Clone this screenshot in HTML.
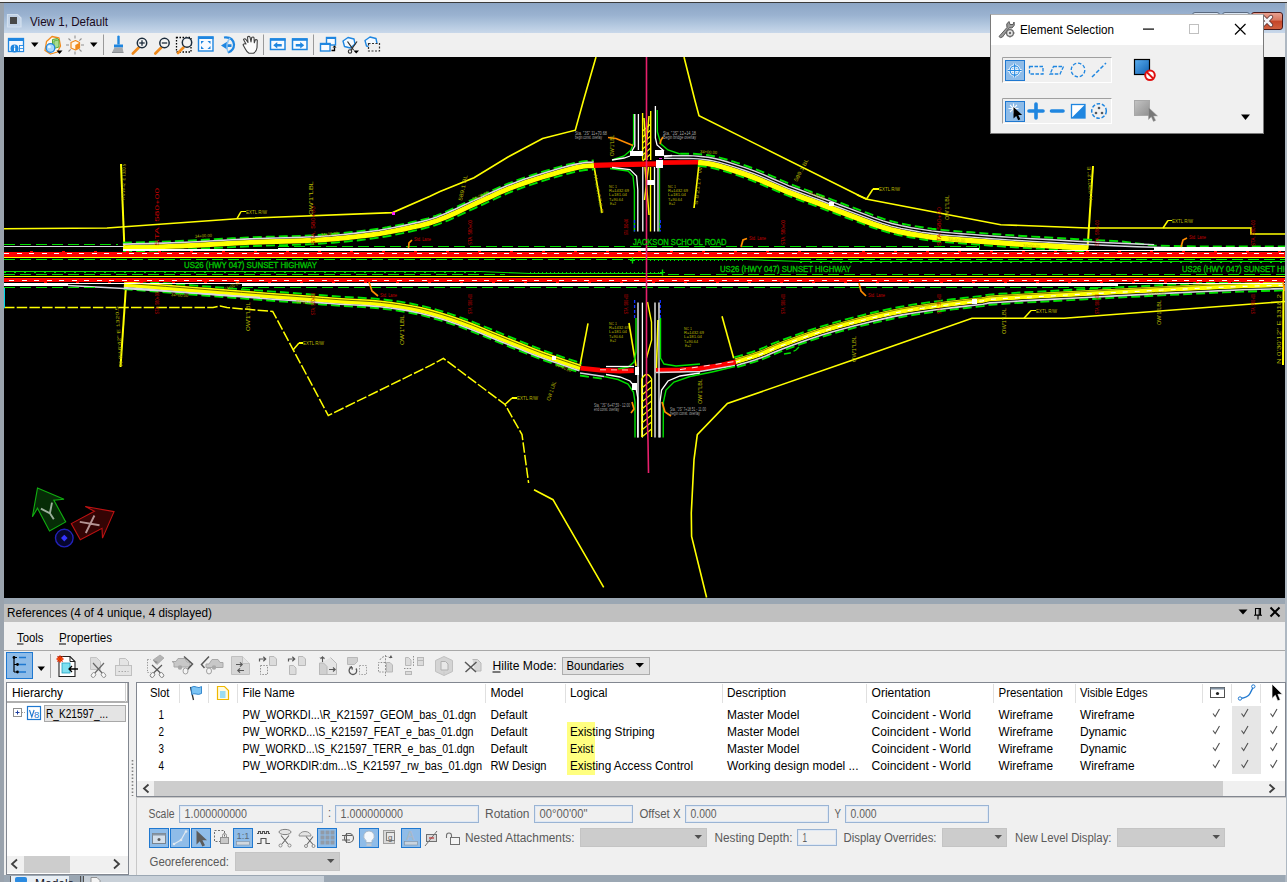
<!DOCTYPE html>
<html>
<head>
<meta charset="utf-8">
<title>View 1</title>
<style>
*{box-sizing:border-box;margin:0;padding:0}
html,body{width:1287px;height:882px;overflow:hidden;background:#9fa9b3;font-family:"Liberation Sans",sans-serif;font-size:12px;color:#000}
.abs{position:absolute}
#top0{left:0;top:0;width:1287px;height:2px;background:#f4f4f6}
#top1{left:0;top:2px;width:1287px;height:1px;background:#3a3a3a}
#titlebar{left:4px;top:3px;width:1281px;height:30px;background:linear-gradient(#8ca5c5 0%,#9ab2d0 40%,#b2c7df 72%,#c9d8ea 100%)}
#title{left:30px;top:13px;font-size:12.6px;color:#1a0a20;white-space:nowrap}
#vtb{left:4px;top:33px;width:1281px;height:24px;background:#f0f0f0}
#canvas{left:4px;top:57px;width:1281px;height:541px;background:#000}
#lb{left:0;top:3px;width:4px;height:879px;background:#9aa3ad}
#rb{left:1285px;top:3px;width:2px;height:879px;background:#aeb8c2}
#vbot{left:0;top:598px;width:1287px;height:6px;background:#9ba7b3}
/* references */
#rtitle{left:4px;top:604px;width:1283px;height:18px;background:#c0c0c0}
#rmenu{left:4px;top:622px;width:1283px;height:29px;background:#f0f0f0;border-bottom:1px solid #a8a8a8}
#rtool{left:4px;top:651px;width:1283px;height:31px;background:#f0f0f0}
#rbody{left:4px;top:682px;width:1283px;height:193px;background:#f0f0f0}
#bstrip{left:0;top:875px;width:1287px;height:7px;background:#9ba7b3}
.t{position:absolute;white-space:nowrap}
</style>
</head>
<body>
<div class="abs" id="top0"></div>
<div class="abs" id="top1"></div>
<div class="abs" id="titlebar"></div>
<div class="abs" id="vtb"></div>
<div class="abs" id="canvas"></div>
<div class="abs" id="vbot"></div>
<div class="abs" id="rtitle"></div>
<div class="abs" id="rmenu"></div>
<div class="abs" id="rtool"></div>
<div class="abs" id="rbody"></div>
<div class="abs" id="bstrip"></div>
<div class="abs" id="lb"></div>
<div class="abs" id="rb"></div>
<svg class="abs" style="left:0;top:0" width="1287" height="882" viewBox="0 0 1287 882"><defs><clipPath id="cv"><rect x="4" y="57" width="1281" height="541"/></clipPath></defs><g clip-path="url(#cv)"><g><polyline points="4.0,228.7 107.0,228.0 237.0,218.7 392.6,212.6 430.0,196.3 440.0,191.5 474.0,177.8 508.0,157.0 542.6,138.5 575.3,130.2 583.6,100.0 596.0,57.0" fill="none" stroke="#ffff00" stroke-width="1.6" />
<line x1="237" y1="218.7" x2="241" y2="211.5" stroke="#ffff00" stroke-width="1.5"/>
<line x1="241" y1="211.5" x2="246" y2="211.5" stroke="#ffff00" stroke-width="1.5" shape-rendering="crispEdges"/>
<polyline points="684.0,57.0 694.8,100.0 699.0,115.6 760.0,146.1 860.0,196.0 866.5,199.0" fill="none" stroke="#ffff00" stroke-width="1.6" />
<polyline points="857.0,194.7 866.0,199.0 1000.7,224.7 1087.5,228.0 1251.0,228.0 1251.0,234.0 1285.0,234.0" fill="none" stroke="#ffff00" stroke-width="1.6" />
<line x1="866.5" y1="199" x2="873" y2="189" stroke="#ffff00" stroke-width="1.5"/>
<line x1="873" y1="189" x2="879" y2="189" stroke="#ffff00" stroke-width="1.5" shape-rendering="crispEdges"/>
<line x1="1163" y1="228" x2="1168" y2="220.5" stroke="#ffff00" stroke-width="1.5"/>
<line x1="1168" y1="220.5" x2="1172" y2="220.5" stroke="#ffff00" stroke-width="1.5" shape-rendering="crispEdges"/>
<polyline points="4.0,307.4 213.0,307.4 220.0,306.0 227.0,307.6 272.7,311.4 328.3,415.5 430.0,365.6 443.4,358.4 505.0,404.5 522.0,434.6 528.6,483.0" fill="none" stroke="#ffff00" stroke-width="1.5" stroke-dasharray="10.5 2.2" />
<polyline points="534.0,489.7 553.0,499.7 603.7,587.3" fill="none" stroke="#ffff00" stroke-width="1.6" />
<line x1="293" y1="350" x2="299" y2="343" stroke="#ffff00" stroke-width="1.5"/>
<line x1="299" y1="343" x2="303" y2="343" stroke="#ffff00" stroke-width="1.5" shape-rendering="crispEdges"/>
<line x1="505" y1="404.5" x2="512" y2="398" stroke="#ffff00" stroke-width="1.5"/>
<line x1="512" y1="398" x2="517" y2="398" stroke="#ffff00" stroke-width="1.5" shape-rendering="crispEdges"/>
<polyline points="706.6,597.5 691.6,536.5 691.3,513.0 694.0,459.6 697.3,434.6 727.4,403.5 860.0,357.5 972.0,318.3 1064.0,318.3 1285.0,301.5" fill="none" stroke="#ffff00" stroke-width="1.6" />
<line x1="1024" y1="318.3" x2="1031" y2="310.5" stroke="#ffff00" stroke-width="1.5"/>
<line x1="1031" y1="310.5" x2="1036" y2="310.5" stroke="#ffff00" stroke-width="1.5" shape-rendering="crispEdges"/>
<line x1="121" y1="164" x2="124.5" y2="250" stroke="#ffff00" stroke-width="2"/>
<line x1="126" y1="286" x2="120.5" y2="367" stroke="#ffff00" stroke-width="2"/>
<line x1="1093" y1="166" x2="1087.5" y2="249" stroke="#ffff00" stroke-width="2"/>
<line x1="1283.5" y1="285" x2="1283" y2="365" stroke="#ffff00" stroke-width="2"/>
<line x1="594" y1="166" x2="602" y2="213" stroke="#ffff00" stroke-width="1.6"/>
<line x1="699" y1="164" x2="694" y2="208" stroke="#ffff00" stroke-width="1.6"/>
<line x1="588" y1="323.3" x2="580.2" y2="364.5" stroke="#ffff00" stroke-width="1.6"/>
<line x1="722" y1="316.3" x2="733.7" y2="358.3" stroke="#ffff00" stroke-width="1.6"/>
<line x1="629" y1="323" x2="636" y2="366" stroke="#ffff00" stroke-width="1.6"/>
<line x1="658" y1="320" x2="656.3" y2="372" stroke="#ffff00" stroke-width="1.6"/>
<polyline points="122.9,242.7 132.8,242.4 147.0,242.1 163.3,241.6 179.8,241.0 196.4,240.2 214.0,239.3 232.1,238.3 249.8,237.4 267.4,236.8 285.0,236.3 302.0,235.8 317.7,235.0 332.1,234.0 345.6,232.7 358.1,231.4 369.4,230.0 379.0,228.7 387.2,227.3 394.9,225.8 403.0,224.1 411.4,222.3 419.7,220.4 428.0,218.3 436.3,215.6 445.0,212.2 453.9,208.2 463.0,203.9 471.9,199.8 480.5,195.8 489.0,191.9 497.5,188.0 506.1,184.4 514.9,181.0 523.7,177.9 532.4,175.0 541.1,172.2 550.2,169.5 559.4,166.8 568.2,164.4 575.7,162.6 582.0,161.5 587.1,160.9 591.0,160.7 593.7,160.5" fill="none" stroke="#00e000" stroke-width="1.9" stroke-dasharray="9 4" />
<polyline points="123.1,251.5 133.0,251.2 147.2,250.9 163.6,250.4 180.2,249.8 196.8,249.0 214.5,248.0 232.5,247.1 250.2,246.2 267.6,245.6 285.2,245.1 302.3,244.6 318.2,243.8 332.9,242.7 346.5,241.5 359.1,240.2 370.5,238.8 380.3,237.4 388.8,236.0 396.7,234.4 404.8,232.7 413.3,230.9 421.8,229.0 430.4,226.7 439.3,223.9 448.4,220.3 457.6,216.2 466.7,211.9 475.6,207.8 484.2,203.8 492.7,199.9 501.0,196.1 509.4,192.5 517.9,189.3 526.5,186.2 535.1,183.4 543.7,180.6 552.7,177.9 561.8,175.3 570.4,173.0 577.6,171.2 583.3,170.2 587.9,169.7 591.5,169.5 594.3,169.3" fill="none" stroke="#00e000" stroke-width="1.9" stroke-dasharray="9 4" />
<polyline points="123.0,247.7 132.9,247.4 147.1,247.1 163.5,246.6 180.0,246.0 196.6,245.2 214.3,244.2 232.3,243.3 250.0,242.4 267.5,241.8 285.1,241.3 302.2,240.8 318.0,240.0 332.5,239.0 346.1,237.7 358.6,236.4 370.0,235.0 379.8,233.6 388.1,232.2 395.9,230.7 404.0,229.0 412.5,227.2 420.9,225.3 429.4,223.1 438.0,220.3 446.9,216.8 456.0,212.7 465.1,208.4 474.0,204.3 482.6,200.3 491.1,196.4 499.5,192.6 508.0,189.0 516.6,185.7 525.3,182.6 534.0,179.7 542.6,177.0 551.6,174.3 560.8,171.6 569.5,169.3 576.8,167.5 582.7,166.4 587.5,165.9 591.3,165.7 594.0,165.5" fill="none" stroke="#ffff00" stroke-width="4.9" />
<polyline points="122.9,244.2 132.8,243.9 147.0,243.6 163.4,243.1 179.9,242.5 196.5,241.7 214.1,240.7 232.2,239.8 249.9,238.9 267.4,238.3 285.0,237.8 302.0,237.3 317.8,236.5 332.3,235.5 345.8,234.2 358.2,232.9 369.5,231.5 379.2,230.2 387.5,228.8 395.2,227.3 403.3,225.6 411.7,223.8 420.0,221.9 428.4,219.7 436.8,217.0 445.5,213.6 454.5,209.5 463.6,205.3 472.5,201.1 481.2,197.2 489.6,193.2 498.1,189.4 506.7,185.8 515.4,182.4 524.1,179.3 532.9,176.4 541.6,173.7 550.6,170.9 559.8,168.3 568.6,165.9 576.1,164.1 582.2,163.0 587.2,162.4 591.1,162.2 593.8,162.0" fill="none" stroke="#d8d8e0" stroke-width="1.6" />
<polyline points="680.1,153.7 684.3,153.7 688.8,153.7 693.6,153.8 698.7,154.1 703.5,154.6 708.4,155.2 714.0,156.2 720.5,157.8 728.4,160.0 737.2,162.8 746.5,166.0 755.6,169.2 764.4,172.8 773.0,176.5 781.5,180.3 789.9,183.8 798.3,187.1 806.8,190.2 815.3,193.3 823.9,196.5 832.4,199.8 840.9,203.0 849.3,206.2 857.9,209.4 866.5,212.7 875.1,215.9 883.7,218.9 892.5,221.5 901.9,223.7 911.8,225.6 921.9,227.3 931.9,228.8 941.7,229.9 951.6,230.8 961.6,231.6 971.6,232.3 981.8,233.1 991.9,233.9 1002.0,234.6 1012.1,235.3 1022.3,236.0 1032.6,236.6 1042.7,237.2 1052.5,237.7 1061.1,238.2 1068.9,238.7 1077.4,239.2 1088.4,239.7 1102.8,240.4 1119.5,241.2 1154.0,245.6 1200.0,246.4 1285.0,246.5" fill="none" stroke="#00e000" stroke-width="1.9" stroke-dasharray="9 4" />
<polyline points="697.7,165.9 702.2,166.3 706.7,166.9 711.5,167.8 717.5,169.2 725.0,171.3 733.5,174.0 742.6,177.1 751.4,180.3 759.8,183.7 768.3,187.4 776.9,191.1 785.5,194.7 794.1,198.1 802.7,201.3 811.3,204.4 819.8,207.6 828.2,210.8 836.7,214.0 845.2,217.3 853.8,220.5 862.4,223.7 871.1,227.0 880.1,230.1 889.5,232.9 899.4,235.2 909.7,237.2 920.1,239.0 930.3,240.5 940.5,241.7 950.6,242.6 960.7,243.3 970.7,244.1 980.9,244.9 991.0,245.7 1001.2,246.4 1011.4,247.1 1021.6,247.7 1031.9,248.4 1042.0,248.9 1051.8,249.5 1060.4,250.0 1068.2,250.5 1076.8,250.9 1087.8,251.5" fill="none" stroke="#00e000" stroke-width="1.9" stroke-dasharray="9 4" />
<polyline points="698.0,162.4 702.6,162.9 707.2,163.4 712.3,164.3 718.4,165.8 726.0,168.0 734.6,170.7 743.7,173.8 752.6,177.0 761.1,180.4 769.7,184.2 778.3,187.9 786.8,191.5 795.4,194.8 803.9,198.0 812.5,201.1 821.0,204.3 829.5,207.5 837.9,210.8 846.4,214.0 855.0,217.2 863.6,220.4 872.3,223.7 881.2,226.8 890.4,229.5 900.2,231.8 910.3,233.8 920.6,235.5 930.8,237.0 940.9,238.2 950.9,239.1 960.9,239.8 971.0,240.6 981.1,241.4 991.3,242.2 1001.5,242.9 1011.6,243.6 1021.8,244.3 1032.1,244.9 1042.2,245.4 1052.0,246.0 1060.6,246.5 1068.4,247.0 1077.0,247.5 1088.0,248.0" fill="none" stroke="#ffff00" stroke-width="5.3" />
<polyline points="664.0,158.3 666.9,158.3 670.9,158.4 675.5,158.4 680.0,158.5 684.3,158.5 688.8,158.5 693.4,158.6 698.3,158.9 703.0,159.4 707.7,160.0 713.0,160.9 719.3,162.4 727.0,164.6 735.7,167.4 744.9,170.5 753.8,173.7 762.5,177.2 771.1,180.9 779.6,184.7 788.1,188.3 796.6,191.5 805.1,194.7 813.7,197.8 822.2,201.0 830.7,204.3 839.2,207.5 847.6,210.7 856.2,213.9 864.9,217.2 873.5,220.4 882.2,223.4 891.3,226.1 900.9,228.4 910.9,230.3 921.1,232.1 931.3,233.5 941.2,234.7 951.2,235.6 961.2,236.3 971.3,237.1 981.4,237.9 991.5,238.7 1001.7,239.4 1011.8,240.1 1022.0,240.8 1032.3,241.4 1042.4,241.9 1052.2,242.5 1060.8,243.0 1068.6,243.5 1077.2,244.0 1088.2,244.5 1102.6,245.2 1119.3,246.0 1136.9,246.7 1154.1,247.3 1170.6,247.7 1187.1,248.0 1203.6,248.3 1220.0,248.5 1237.9,248.7 1256.7,248.9 1273.4,249.0 1285.0,249.1" fill="none" stroke="#d8d8e0" stroke-width="1.4" />
<polyline points="664.1,155.6 666.9,155.6 670.9,155.7 675.6,155.7 680.1,155.8 684.3,155.8 688.8,155.8 693.6,155.9 698.5,156.2 703.3,156.7 708.1,157.3 713.6,158.3 720.0,159.8 727.8,162.0 736.6,164.8 745.8,167.9 754.8,171.2 763.5,174.7 772.2,178.5 780.7,182.2 789.1,185.8 797.6,189.0 806.1,192.2 814.6,195.3 823.2,198.5 831.7,201.7 840.1,205.0 848.6,208.2 857.2,211.4 865.8,214.6 874.4,217.9 883.1,220.9 892.0,223.5 901.5,225.7 911.4,227.7 921.6,229.4 931.6,230.9 941.5,232.0 951.4,232.9 961.4,233.7 971.5,234.4 981.6,235.2 991.7,236.0 1001.9,236.7 1012.0,237.4 1022.2,238.1 1032.4,238.7 1042.6,239.3 1052.4,239.8 1061.0,240.3 1068.8,240.8 1077.3,241.3 1088.3,241.8 1102.7,242.5 1119.4,243.3 1137.0,244.0 1154.2,244.6" fill="none" stroke="#d8d8e0" stroke-width="1.4" />
<rect x="828.5" y="201.5" width="5" height="4" fill="#ffffff" shape-rendering="crispEdges"/>
<polyline points="124.4,279.9 134.5,280.7 149.1,281.9 165.5,283.2 181.4,284.4 196.2,285.6 211.3,286.8 226.6,288.0 241.8,289.2 257.4,290.4 273.4,291.6 288.8,292.7 302.3,293.7 313.4,294.6 322.6,295.3 331.2,295.9 340.3,296.6 350.2,297.2 360.3,297.7 370.6,298.3 380.9,299.2 391.1,300.5 401.3,301.9 411.6,303.7 421.8,305.8 432.1,308.4 442.2,311.3 452.4,314.6 462.5,318.1 472.8,321.9 483.0,326.0 493.2,330.2 503.3,334.3 513.5,338.4 523.7,342.6 533.7,346.6 543.6,350.4 554.2,354.2 565.2,357.9 575.0,361.2 581.9,363.5" fill="none" stroke="#00e000" stroke-width="1.9" stroke-dasharray="9 4" />
<polyline points="123.6,289.1 133.8,289.9 148.4,291.0 164.8,292.3 180.6,293.6 195.5,294.8 210.6,296.0 225.8,297.2 241.0,298.4 256.7,299.6 272.8,300.8 288.1,301.9 301.7,302.9 312.7,303.7 321.9,304.5 330.5,305.1 339.7,305.8 349.7,306.4 359.8,306.9 369.9,307.5 379.9,308.4 389.9,309.6 399.9,311.0 409.9,312.7 419.8,314.8 429.7,317.3 439.5,320.1 449.5,323.3 459.5,326.7 469.5,330.5 479.5,334.5 489.7,338.7 499.9,342.9 510.0,347.0 520.2,351.1 530.4,355.2 540.4,359.0 551.1,362.9 562.2,366.7 572.1,370.0 578.9,372.3" fill="none" stroke="#00e000" stroke-width="1.9" stroke-dasharray="9 4" />
<polyline points="124.0,284.1 134.2,284.9 148.8,286.1 165.2,287.3 181.0,288.6 195.9,289.8 211.0,291.0 226.2,292.2 241.4,293.4 257.1,294.6 273.1,295.8 288.5,296.9 302.0,297.9 313.1,298.7 322.3,299.5 330.9,300.1 340.0,300.8 350.0,301.4 360.1,301.9 370.3,302.5 380.4,303.4 390.6,304.6 400.7,306.1 410.8,307.8 420.9,309.9 431.0,312.4 441.0,315.4 451.1,318.6 461.1,322.0 471.3,325.8 481.4,329.9 491.6,334.1 501.8,338.2 511.9,342.3 522.1,346.5 532.2,350.5 542.1,354.3 552.8,358.1 563.9,361.9 573.7,365.2 580.5,367.5" fill="none" stroke="#ffff00" stroke-width="5.8" />
<polyline points="124.1,283.1 134.3,283.9 148.8,285.1 165.3,286.4 181.1,287.6 196.0,288.8 211.1,290.0 226.3,291.2 241.5,292.4 257.2,293.6 273.2,294.8 288.5,295.9 302.1,296.9 313.1,297.7 322.4,298.5 331.0,299.1 340.1,299.8 350.0,300.4 360.1,300.9 370.3,301.5 380.5,302.4 390.7,303.6 400.8,305.1 411.0,306.8 421.1,308.9 431.2,311.5 441.3,314.4 451.4,317.6 461.5,321.1 471.6,324.9 481.8,329.0 492.0,333.2 502.1,337.3 512.3,341.4 522.5,345.5 532.6,349.6 542.5,353.4 553.1,357.2 564.2,361.0 574.0,364.3 580.8,366.6" fill="none" stroke="#302800" stroke-width="0.7" />
<polyline points="123.8,287.5 133.9,288.3 148.5,289.4 164.9,290.7 180.8,292.0 195.6,293.2 210.7,294.4 226.0,295.6 241.2,296.8 256.8,298.0 272.9,299.2 288.2,300.3 301.8,301.3 312.8,302.1 322.0,302.9 330.6,303.5 339.8,304.2 349.8,304.8 359.9,305.3 370.0,305.9 380.1,306.8 390.1,308.0 400.1,309.4 410.2,311.1 420.1,313.2 430.1,315.7 440.0,318.6 450.0,321.8 460.0,325.2 470.0,329.0 480.2,333.0 490.3,337.2 500.5,341.4 510.6,345.5 520.8,349.6 531.0,353.7 541.0,357.5 551.6,361.3 562.8,365.1 572.6,368.4 579.4,370.7" fill="none" stroke="#d8d8e0" stroke-width="1.6" />
<rect x="552" y="356" width="4" height="4" fill="#ffffff" shape-rendering="crispEdges"/>
<polyline points="734.2,357.4 738.7,356.1 745.1,354.1 752.1,352.0 758.4,349.9 763.0,348.0 767.2,346.1 772.1,343.9 778.7,341.3 787.4,338.1 797.8,334.3 808.7,330.5 819.4,327.0 829.5,324.0 839.6,321.1 849.7,318.4 859.8,315.8 870.0,313.3 880.2,310.9 890.5,308.7 900.7,306.7 910.9,304.9 921.1,303.4 931.3,302.0 941.4,300.6 952.1,299.3 963.1,298.0 973.4,296.9 981.8,295.9 985.2,295.4 985.7,295.1 989.1,294.6 999.7,293.8 1021.0,292.5 1049.6,291.0 1081.2,289.3 1111.3,287.7 1140.3,286.2 1170.2,284.7 1198.5,283.3 1222.8,282.2 1242.9,281.4 1259.8,280.9 1273.3,280.5 1282.9,280.2" fill="none" stroke="#00e000" stroke-width="1.9" stroke-dasharray="9 4" />
<polyline points="737.2,367.2 741.6,365.8 748.1,363.9 755.3,361.7 761.8,359.5 767.0,357.4 771.4,355.4 776.1,353.3 782.3,350.8 791.0,347.6 801.2,343.9 812.0,340.2 822.4,336.7 832.4,333.7 842.3,330.9 852.3,328.3 862.3,325.7 872.4,323.3 882.5,320.9 892.6,318.7 902.6,316.7 912.6,315.0 922.6,313.5 932.6,312.1 942.7,310.8 953.3,309.4 964.2,308.2 974.5,307.0 983.1,306.1 987.4,305.4 987.9,305.0 990.0,304.7 1000.3,304.0 1021.6,302.7 1050.2,301.2 1081.7,299.5 1111.8,297.9 1140.9,296.4 1170.7,294.9 1199.0,293.5 1223.2,292.4 1243.2,291.6 1260.1,291.1 1273.6,290.7 1283.2,290.4" fill="none" stroke="#00e000" stroke-width="1.9" stroke-dasharray="9 4" />
<polyline points="735.4,361.4 739.9,360.1 746.4,358.2 753.4,356.0 759.8,353.8 764.7,351.9 769.0,350.0 773.8,347.8 780.2,345.2 788.9,342.0 799.2,338.3 810.1,334.5 820.6,331.0 830.7,328.0 840.7,325.2 850.8,322.5 860.9,319.9 871.0,317.4 881.2,315.0 891.3,312.8 901.5,310.8 911.6,309.1 921.7,307.5 931.8,306.1 941.9,304.8 952.6,303.5 963.6,302.2 973.8,301.1 982.3,300.1 986.1,299.5 986.6,299.2 989.5,298.7 1000.0,298.0 1021.2,296.7 1049.8,295.2 1081.4,293.5 1111.5,291.9 1140.6,290.4 1170.4,288.9 1198.7,287.5 1223.0,286.4 1243.0,285.6 1260.0,285.1 1273.4,284.7 1283.0,284.4" fill="none" stroke="#ffff00" stroke-width="5.8" />
<polyline points="734.9,359.7 739.4,358.4 745.8,356.4 752.9,354.3 759.2,352.1 764.0,350.2 768.2,348.3 773.1,346.2 779.5,343.6 788.3,340.3 798.6,336.6 809.5,332.8 820.1,329.3 830.2,326.3 840.3,323.4 850.3,320.7 860.4,318.2 870.6,315.7 880.8,313.3 891.0,311.1 901.2,309.0 911.3,307.3 921.5,305.7 931.6,304.4 941.7,303.0 952.3,301.7 963.4,300.4 973.6,299.3 982.1,298.3 985.7,297.7 986.2,297.4 989.3,297.0 999.8,296.2 1021.1,294.9 1049.8,293.4 1081.3,291.7 1111.4,290.1 1140.5,288.6 1170.3,287.1 1198.6,285.7 1222.9,284.6 1242.9,283.8 1259.9,283.3 1273.4,282.9 1282.9,282.6" fill="none" stroke="#403800" stroke-width="0.6" />
<polyline points="735.7,362.2 740.1,360.8 746.6,358.9 753.7,356.7 760.1,354.6 765.0,352.6 769.3,350.7 774.1,348.6 780.5,346.0 789.2,342.8 799.4,339.0 810.3,335.3 820.9,331.8 830.9,328.8 840.9,325.9 851.0,323.3 861.0,320.7 871.2,318.2 881.3,315.8 891.5,313.6 901.6,311.6 911.7,309.8 921.8,308.3 931.9,306.9 942.0,305.6 952.7,304.3 963.6,303.0 973.9,301.9 982.4,300.9 986.2,300.3 986.8,299.9 989.5,299.5 1000.0,298.8 1021.3,297.5 1049.9,296.0 1081.4,294.3 1111.5,292.7 1140.6,291.2 1170.5,289.7 1198.8,288.3 1223.0,287.2 1243.0,286.4 1260.0,285.9 1273.4,285.5 1283.0,285.2" fill="none" stroke="#ffffff" stroke-width="1.1" stroke-dasharray="5 7" />
<polyline points="736.3,364.5 740.8,363.1 747.3,361.2 754.4,359.0 760.9,356.8 765.9,354.8 770.3,352.9 775.0,350.8 781.3,348.2 790.0,345.0 800.2,341.3 811.1,337.5 821.6,334.1 831.6,331.1 841.6,328.2 851.6,325.6 861.6,323.0 871.7,320.5 881.9,318.2 892.0,316.0 902.1,314.0 912.1,312.2 922.2,310.7 932.3,309.3 942.3,308.0 952.9,306.7 963.9,305.4 974.2,304.2 982.7,303.3 986.8,302.6 987.3,302.3 989.8,301.9 1000.2,301.2 1021.4,299.9 1050.0,298.4 1081.6,296.7 1111.6,295.1 1140.7,293.6 1170.6,292.1 1198.9,290.7 1223.1,289.6 1243.1,288.8 1260.0,288.3 1273.5,287.9 1283.1,287.6" fill="none" stroke="#000" stroke-width="0.8" />
<polyline points="736.6,365.4 741.1,364.1 747.6,362.2 754.7,360.0 761.2,357.8 766.3,355.8 770.7,353.8 775.4,351.7 781.7,349.2 790.3,346.0 800.6,342.2 811.4,338.5 821.9,335.0 831.9,332.0 841.8,329.2 851.8,326.5 861.9,324.0 872.0,321.5 882.1,319.1 892.2,316.9 902.3,314.9 912.3,313.2 922.3,311.7 932.4,310.3 942.5,309.0 953.1,307.6 964.0,306.4 974.3,305.2 982.9,304.3 987.0,303.6 987.5,303.3 989.8,302.9 1000.2,302.2 1021.5,300.9 1050.1,299.4 1081.6,297.7 1111.7,296.1 1140.8,294.6 1170.6,293.1 1198.9,291.7 1223.2,290.6 1243.2,289.8 1260.1,289.3 1273.5,288.9 1283.1,288.6" fill="none" stroke="#d8d8e0" stroke-width="1.6" />
<rect x="972" y="298.5" width="5" height="5" fill="#ffffff" shape-rendering="crispEdges"/>
<polyline points="784.0,354.0 790.0,353.0 796.0,350.0 801.0,345.0" fill="none" stroke="#00e000" stroke-width="1.3" stroke-dasharray="7 3" />
<polyline points="68.0,285.5 124.0,288.5 200.0,293.5 260.0,297.5" fill="none" stroke="#d8d8e0" stroke-width="1.6" />
<polyline points="594.0,165.4 620.0,164.6 656.0,163.8" fill="none" stroke="#ff0000" stroke-width="5.2" />
<polyline points="661.0,162.6 698.0,162.2" fill="none" stroke="#ff0000" stroke-width="4.6" />
<polyline points="580.4,368.2 600.0,370.2 620.0,371.0 633.8,370.7" fill="none" stroke="#ff0000" stroke-width="4.8" />
<polyline points="655.6,370.4 680.0,370.0 700.0,368.4 718.0,366.0 735.6,362.0" fill="none" stroke="#ff0000" stroke-width="5" />
<polyline points="600.0,369.8 633.0,370.0" fill="none" stroke="#ffffff" stroke-width="0.8" stroke-dasharray="6 5" />
<polyline points="680.0,369.6 735.0,361.5" fill="none" stroke="#ffffff" stroke-width="0.9" stroke-dasharray="6 6" />
<line x1="4" y1="244.5" x2="118" y2="244.5" stroke="#00e000" stroke-width="1" stroke-dasharray="11 5" shape-rendering="crispEdges"/>
<line x1="4" y1="246.5" x2="124" y2="246.5" stroke="#d8d8e0" stroke-width="1" shape-rendering="crispEdges"/>
<rect x="123" y="249" width="155" height="1.6" fill="#ffffff" shape-rendering="crispEdges"/>
<rect x="278" y="247.5" width="702" height="3.3" fill="#ffffff" shape-rendering="crispEdges"/>
<rect x="980" y="249.6" width="174" height="1.1" fill="#ffffff" shape-rendering="crispEdges"/>
<rect x="1154" y="247.2" width="131" height="3.3" fill="#ffffff" shape-rendering="crispEdges"/>
<line x1="278" y1="246.6" x2="980" y2="246.6" stroke="#00e000" stroke-width="1.2" stroke-dasharray="11 5" shape-rendering="crispEdges"/>
<line x1="979.5" y1="246" x2="979.5" y2="250" stroke="#00e000" stroke-width="1"/>
<rect x="4" y="251.7" width="1281" height="5" fill="#ff0000" shape-rendering="crispEdges"/>
<line x1="4" y1="253.5" x2="1285" y2="253.5" stroke="#ffffff" stroke-width="1" stroke-dasharray="5 7.5" shape-rendering="crispEdges"/>
<line x1="4" y1="257.5" x2="1285" y2="257.5" stroke="#ffff00" stroke-width="1.5" shape-rendering="crispEdges"/>
<line x1="4" y1="259.5" x2="631" y2="259.5" stroke="#00e000" stroke-width="1" stroke-dasharray="11 5" shape-rendering="crispEdges"/>
<line x1="800" y1="259.5" x2="1285" y2="259.5" stroke="#00e000" stroke-width="1" stroke-dasharray="11 5" shape-rendering="crispEdges"/>
<polyline points="631.0,259.5 746.0,259.5 800.0,261.5 1285.0,261.5" fill="none" stroke="#00e000" stroke-width="1.1" />
<line x1="634" y1="260.5" x2="746" y2="260.5" stroke="#00e000" stroke-width="1" stroke-dasharray="1 3" shape-rendering="crispEdges"/>
<line x1="800" y1="262.3" x2="1285" y2="262.3" stroke="#00e000" stroke-width="1.6" stroke-dasharray="2 8" shape-rendering="crispEdges"/>
<line x1="630.0" y1="260.5" x2="635.0" y2="260.5" stroke="#00e000" stroke-width="1.4" shape-rendering="crispEdges"/>
<line x1="632.5" y1="257.5" x2="632.5" y2="263.5" stroke="#00e000" stroke-width="1.4"/>
<line x1="660.0" y1="272.5" x2="665.0" y2="272.5" stroke="#00e000" stroke-width="1.4" shape-rendering="crispEdges"/>
<line x1="662.5" y1="269.5" x2="662.5" y2="275.5" stroke="#00e000" stroke-width="1.4"/>
<polyline points="4.0,271.5 480.0,271.5 530.0,273.5 662.0,273.5" fill="none" stroke="#00e000" stroke-width="1.1" />
<line x1="4" y1="272.6" x2="180" y2="272.6" stroke="#00e000" stroke-width="1" stroke-dasharray="2 8" shape-rendering="crispEdges"/>
<line x1="184" y1="272.3" x2="480" y2="272.3" stroke="#00e000" stroke-width="1.8" stroke-dasharray="2 8" shape-rendering="crispEdges"/>
<line x1="530" y1="272.5" x2="662" y2="272.5" stroke="#00e000" stroke-width="1" stroke-dasharray="1 3" shape-rendering="crispEdges"/>
<line x1="4" y1="274.5" x2="505" y2="274.5" stroke="#00e000" stroke-width="1" stroke-dasharray="11 5" shape-rendering="crispEdges"/>
<line x1="668" y1="274.5" x2="1285" y2="274.5" stroke="#00e000" stroke-width="1" stroke-dasharray="11 5" shape-rendering="crispEdges"/>
<line x1="4" y1="276.5" x2="1285" y2="276.5" stroke="#ffff00" stroke-width="1.5" shape-rendering="crispEdges"/>
<rect x="4" y="277.8" width="1281" height="4.4" fill="#ff0000" shape-rendering="crispEdges"/>
<line x1="9" y1="280.3" x2="1285" y2="280.3" stroke="#ffffff" stroke-width="1" stroke-dasharray="5 7.5" shape-rendering="crispEdges"/>
<rect x="4" y="283" width="64" height="3.3" fill="#ffffff" shape-rendering="crispEdges"/>
<rect x="68" y="283" width="174" height="1.1" fill="#ffffff" shape-rendering="crispEdges"/>
<rect x="242" y="283" width="876" height="3.3" fill="#ffffff" shape-rendering="crispEdges"/>
<rect x="1118" y="283" width="167" height="1.1" fill="#ffffff" shape-rendering="crispEdges"/>
<line x1="4" y1="287.5" x2="100" y2="287.5" stroke="#00e000" stroke-width="1" stroke-dasharray="11 5" shape-rendering="crispEdges"/>
<line x1="242" y1="287.5" x2="1118" y2="287.5" stroke="#00e000" stroke-width="1.2" stroke-dasharray="11 5" shape-rendering="crispEdges"/>
<rect x="30" y="251" width="3" height="1" fill="#ff0000" shape-rendering="crispEdges"/>
<rect x="44" y="282" width="3" height="1" fill="#ff0000" shape-rendering="crispEdges"/>
<rect x="62" y="251" width="3" height="1" fill="#ff0000" shape-rendering="crispEdges"/>
<rect x="76" y="282" width="3" height="1" fill="#ff0000" shape-rendering="crispEdges"/>
<rect x="94" y="251" width="3" height="1" fill="#ff0000" shape-rendering="crispEdges"/>
<rect x="108" y="282" width="3" height="1" fill="#ff0000" shape-rendering="crispEdges"/>
<rect x="126" y="251" width="3" height="1" fill="#ff0000" shape-rendering="crispEdges"/>
<rect x="140" y="282" width="3" height="1" fill="#ff0000" shape-rendering="crispEdges"/>
<rect x="158" y="251" width="3" height="1" fill="#ff0000" shape-rendering="crispEdges"/>
<rect x="172" y="282" width="3" height="1" fill="#ff0000" shape-rendering="crispEdges"/>
<rect x="190" y="251" width="3" height="1" fill="#ff0000" shape-rendering="crispEdges"/>
<rect x="204" y="282" width="3" height="1" fill="#ff0000" shape-rendering="crispEdges"/>
<rect x="222" y="251" width="3" height="1" fill="#ff0000" shape-rendering="crispEdges"/>
<rect x="236" y="282" width="3" height="1" fill="#ff0000" shape-rendering="crispEdges"/>
<rect x="254" y="251" width="3" height="1" fill="#ff0000" shape-rendering="crispEdges"/>
<rect x="268" y="282" width="3" height="1" fill="#ff0000" shape-rendering="crispEdges"/>
<rect x="286" y="251" width="3" height="1" fill="#ff0000" shape-rendering="crispEdges"/>
<rect x="300" y="282" width="3" height="1" fill="#ff0000" shape-rendering="crispEdges"/>
<rect x="318" y="251" width="3" height="1" fill="#ff0000" shape-rendering="crispEdges"/>
<rect x="332" y="282" width="3" height="1" fill="#ff0000" shape-rendering="crispEdges"/>
<rect x="350" y="251" width="3" height="1" fill="#ff0000" shape-rendering="crispEdges"/>
<rect x="364" y="282" width="3" height="1" fill="#ff0000" shape-rendering="crispEdges"/>
<rect x="382" y="251" width="3" height="1" fill="#ff0000" shape-rendering="crispEdges"/>
<rect x="396" y="282" width="3" height="1" fill="#ff0000" shape-rendering="crispEdges"/>
<rect x="414" y="251" width="3" height="1" fill="#ff0000" shape-rendering="crispEdges"/>
<rect x="428" y="282" width="3" height="1" fill="#ff0000" shape-rendering="crispEdges"/>
<rect x="446" y="251" width="3" height="1" fill="#ff0000" shape-rendering="crispEdges"/>
<rect x="460" y="282" width="3" height="1" fill="#ff0000" shape-rendering="crispEdges"/>
<rect x="478" y="251" width="3" height="1" fill="#ff0000" shape-rendering="crispEdges"/>
<rect x="492" y="282" width="3" height="1" fill="#ff0000" shape-rendering="crispEdges"/>
<rect x="510" y="251" width="3" height="1" fill="#ff0000" shape-rendering="crispEdges"/>
<rect x="524" y="282" width="3" height="1" fill="#ff0000" shape-rendering="crispEdges"/>
<rect x="542" y="251" width="3" height="1" fill="#ff0000" shape-rendering="crispEdges"/>
<rect x="556" y="282" width="3" height="1" fill="#ff0000" shape-rendering="crispEdges"/>
<rect x="574" y="251" width="3" height="1" fill="#ff0000" shape-rendering="crispEdges"/>
<rect x="588" y="282" width="3" height="1" fill="#ff0000" shape-rendering="crispEdges"/>
<rect x="606" y="251" width="3" height="1" fill="#ff0000" shape-rendering="crispEdges"/>
<rect x="620" y="282" width="3" height="1" fill="#ff0000" shape-rendering="crispEdges"/>
<rect x="638" y="251" width="3" height="1" fill="#ff0000" shape-rendering="crispEdges"/>
<rect x="652" y="282" width="3" height="1" fill="#ff0000" shape-rendering="crispEdges"/>
<rect x="670" y="251" width="3" height="1" fill="#ff0000" shape-rendering="crispEdges"/>
<rect x="684" y="282" width="3" height="1" fill="#ff0000" shape-rendering="crispEdges"/>
<rect x="702" y="251" width="3" height="1" fill="#ff0000" shape-rendering="crispEdges"/>
<rect x="716" y="282" width="3" height="1" fill="#ff0000" shape-rendering="crispEdges"/>
<rect x="734" y="251" width="3" height="1" fill="#ff0000" shape-rendering="crispEdges"/>
<rect x="748" y="282" width="3" height="1" fill="#ff0000" shape-rendering="crispEdges"/>
<rect x="766" y="251" width="3" height="1" fill="#ff0000" shape-rendering="crispEdges"/>
<rect x="780" y="282" width="3" height="1" fill="#ff0000" shape-rendering="crispEdges"/>
<rect x="798" y="251" width="3" height="1" fill="#ff0000" shape-rendering="crispEdges"/>
<rect x="812" y="282" width="3" height="1" fill="#ff0000" shape-rendering="crispEdges"/>
<rect x="830" y="251" width="3" height="1" fill="#ff0000" shape-rendering="crispEdges"/>
<rect x="844" y="282" width="3" height="1" fill="#ff0000" shape-rendering="crispEdges"/>
<rect x="862" y="251" width="3" height="1" fill="#ff0000" shape-rendering="crispEdges"/>
<rect x="876" y="282" width="3" height="1" fill="#ff0000" shape-rendering="crispEdges"/>
<rect x="894" y="251" width="3" height="1" fill="#ff0000" shape-rendering="crispEdges"/>
<rect x="908" y="282" width="3" height="1" fill="#ff0000" shape-rendering="crispEdges"/>
<rect x="926" y="251" width="3" height="1" fill="#ff0000" shape-rendering="crispEdges"/>
<rect x="940" y="282" width="3" height="1" fill="#ff0000" shape-rendering="crispEdges"/>
<rect x="958" y="251" width="3" height="1" fill="#ff0000" shape-rendering="crispEdges"/>
<rect x="972" y="282" width="3" height="1" fill="#ff0000" shape-rendering="crispEdges"/>
<rect x="990" y="251" width="3" height="1" fill="#ff0000" shape-rendering="crispEdges"/>
<rect x="1004" y="282" width="3" height="1" fill="#ff0000" shape-rendering="crispEdges"/>
<rect x="1022" y="251" width="3" height="1" fill="#ff0000" shape-rendering="crispEdges"/>
<rect x="1036" y="282" width="3" height="1" fill="#ff0000" shape-rendering="crispEdges"/>
<rect x="1054" y="251" width="3" height="1" fill="#ff0000" shape-rendering="crispEdges"/>
<rect x="1068" y="282" width="3" height="1" fill="#ff0000" shape-rendering="crispEdges"/>
<rect x="1086" y="251" width="3" height="1" fill="#ff0000" shape-rendering="crispEdges"/>
<rect x="1100" y="282" width="3" height="1" fill="#ff0000" shape-rendering="crispEdges"/>
<rect x="1118" y="251" width="3" height="1" fill="#ff0000" shape-rendering="crispEdges"/>
<rect x="1132" y="282" width="3" height="1" fill="#ff0000" shape-rendering="crispEdges"/>
<rect x="1150" y="251" width="3" height="1" fill="#ff0000" shape-rendering="crispEdges"/>
<rect x="1164" y="282" width="3" height="1" fill="#ff0000" shape-rendering="crispEdges"/>
<rect x="1182" y="251" width="3" height="1" fill="#ff0000" shape-rendering="crispEdges"/>
<rect x="1196" y="282" width="3" height="1" fill="#ff0000" shape-rendering="crispEdges"/>
<rect x="1214" y="251" width="3" height="1" fill="#ff0000" shape-rendering="crispEdges"/>
<rect x="1228" y="282" width="3" height="1" fill="#ff0000" shape-rendering="crispEdges"/>
<rect x="1246" y="251" width="3" height="1" fill="#ff0000" shape-rendering="crispEdges"/>
<rect x="1260" y="282" width="3" height="1" fill="#ff0000" shape-rendering="crispEdges"/>
<rect x="1278" y="251" width="3" height="1" fill="#ff0000" shape-rendering="crispEdges"/>
<rect x="1292" y="282" width="3" height="1" fill="#ff0000" shape-rendering="crispEdges"/>
<rect x="4" y="288" width="1.4" height="20" fill="#00d8e8" shape-rendering="crispEdges"/>
<polyline points="633.6,114.0 633.6,143.0 631.0,150.0 624.0,156.0 612.0,160.0" fill="none" stroke="#00e000" stroke-width="1.4" />
<polyline points="634.8,114.0 634.8,146.0 632.0,151.0" fill="none" stroke="#ffffff" stroke-width="1.3" />
<line x1="638.4" y1="114" x2="638.4" y2="150" stroke="#ffffff" stroke-width="1.3"/>
<line x1="642.6" y1="113" x2="642.6" y2="160" stroke="#ffff00" stroke-width="1.4"/>
<line x1="650.7" y1="111" x2="650.7" y2="160" stroke="#ffff00" stroke-width="1.4"/>
<line x1="644" y1="118" x2="647" y2="160" stroke="#ffff00" stroke-width="1.5"/>
<line x1="649" y1="116" x2="645" y2="160" stroke="#ffff00" stroke-width="1.5"/>
<line x1="642.6" y1="131" x2="650.7" y2="124" stroke="#ffff00" stroke-width="1.1"/>
<line x1="642.6" y1="137" x2="650.7" y2="130" stroke="#ffff00" stroke-width="1.1"/>
<line x1="642.6" y1="143" x2="650.7" y2="136" stroke="#ffff00" stroke-width="1.1"/>
<line x1="642.6" y1="149" x2="650.7" y2="142" stroke="#ffff00" stroke-width="1.1"/>
<line x1="642.6" y1="155" x2="650.7" y2="148" stroke="#ffff00" stroke-width="1.1"/>
<line x1="642.6" y1="161" x2="650.7" y2="154" stroke="#ffff00" stroke-width="1.1"/>
<polyline points="655.4,106.0 655.4,138.0 657.0,145.0 664.0,151.0" fill="none" stroke="#ffffff" stroke-width="1.3" />
<rect x="654.6" y="105.5" width="1.8" height="2" fill="#ffffff" shape-rendering="crispEdges"/>
<polyline points="657.2,110.0 657.4,132.0 661.0,144.0 668.0,150.0 680.0,154.0" fill="none" stroke="#00e000" stroke-width="1.4" />
<rect x="630" y="151" width="12.8" height="5" fill="#ffffff" shape-rendering="crispEdges"/>
<rect x="655.4" y="149.5" width="8.6" height="6.5" fill="#ffffff" shape-rendering="crispEdges"/>
<rect x="656" y="160" width="6.5" height="7.5" fill="#ffffff" shape-rendering="crispEdges"/>
<rect x="659" y="157.5" width="3" height="1.5" fill="#ff20ff" shape-rendering="crispEdges"/>
<polyline points="612.0,160.0 624.0,158.0 630.0,156.0" fill="none" stroke="#ffffff" stroke-width="1.3" />
<polyline points="664.0,156.5 672.0,155.5" fill="none" stroke="#ffffff" stroke-width="1.3" />
<polyline points="610.0,168.5 628.0,171.0 633.0,176.0 634.4,190.0 634.4,231.5" fill="none" stroke="#00e000" stroke-width="1.4" />
<polyline points="612.0,167.5 630.0,169.5 636.6,176.0 637.8,190.0 637.8,231.5" fill="none" stroke="#ffffff" stroke-width="1.3" />
<line x1="642.8" y1="167" x2="642.8" y2="231.5" stroke="#ffffff" stroke-width="1.3"/>
<line x1="650.5" y1="167" x2="650.5" y2="231.5" stroke="#ffff00" stroke-width="1.4"/>
<line x1="654.5" y1="167" x2="654.5" y2="231.5" stroke="#ffffff" stroke-width="1.3"/>
<line x1="658" y1="167" x2="658" y2="231.5" stroke="#ffffff" stroke-width="1.3"/>
<polyline points="659.6,168.0 659.6,231.5" fill="none" stroke="#00e000" stroke-width="1.1" />
<line x1="645" y1="167" x2="649" y2="215" stroke="#ffff00" stroke-width="1.5"/>
<line x1="648.5" y1="167" x2="644.5" y2="200" stroke="#ffff00" stroke-width="1.5"/>
<rect x="647" y="180.3" width="7.5" height="4.5" fill="#ffffff" shape-rendering="crispEdges"/>
<line x1="634.5" y1="220" x2="634.5" y2="231.5" stroke="#1030ff" stroke-width="1.3" stroke-dasharray="3 2"/>
<line x1="660.3" y1="220" x2="660.3" y2="231.5" stroke="#1030ff" stroke-width="1.3" stroke-dasharray="3 2"/>
<line x1="634.6" y1="300" x2="634.6" y2="318" stroke="#1030ff" stroke-width="1.3" stroke-dasharray="3 2"/>
<line x1="660.3" y1="300" x2="660.3" y2="318" stroke="#1030ff" stroke-width="1.3" stroke-dasharray="3 2"/>
<line x1="638" y1="302.6" x2="638" y2="437.5" stroke="#ffffff" stroke-width="1.3"/>
<line x1="642.4" y1="302.6" x2="642.4" y2="437.5" stroke="#ffffff" stroke-width="1.3"/>
<line x1="655" y1="302.6" x2="655" y2="437.5" stroke="#ffffff" stroke-width="1.3"/>
<line x1="659" y1="302.6" x2="659" y2="437.5" stroke="#ffffff" stroke-width="1.3"/>
<polyline points="636.0,318.0 636.0,352.0 634.0,362.0 628.0,367.0 618.0,369.0" fill="none" stroke="#00e000" stroke-width="1.4" />
<polyline points="660.5,318.0 660.5,358.0 664.0,364.0 676.0,366.0 700.0,364.0" fill="none" stroke="#00e000" stroke-width="1.4" />
<polyline points="647.5,302.0 651.5,322.0 651.6,340.0 646.5,358.0" fill="none" stroke="#ffff00" stroke-width="1.4" />
<path d="M641.8,437 L641.8,379 Q646.7,370 651.6,379 L651.6,437" fill="none" stroke="#ffff00" stroke-width="1.3"/>
<line x1="641.8" y1="388" x2="651.6" y2="380" stroke="#ffff00" stroke-width="1.1"/>
<line x1="641.8" y1="395" x2="651.6" y2="387" stroke="#ffff00" stroke-width="1.1"/>
<line x1="641.8" y1="402" x2="651.6" y2="394" stroke="#ffff00" stroke-width="1.1"/>
<line x1="641.8" y1="409" x2="651.6" y2="401" stroke="#ffff00" stroke-width="1.1"/>
<line x1="641.8" y1="416" x2="651.6" y2="408" stroke="#ffff00" stroke-width="1.1"/>
<line x1="641.8" y1="423" x2="651.6" y2="415" stroke="#ffff00" stroke-width="1.1"/>
<line x1="641.8" y1="430" x2="651.6" y2="422" stroke="#ffff00" stroke-width="1.1"/>
<line x1="641.8" y1="437" x2="651.6" y2="429" stroke="#ffff00" stroke-width="1.1"/>
<polyline points="606.0,374.5 620.0,377.0 630.0,381.0 636.0,388.0 637.8,398.0 637.8,437.5" fill="none" stroke="#ffffff" stroke-width="1.3" />
<polyline points="604.0,376.5 618.0,379.5 628.0,384.0 633.4,392.0 635.0,402.0 635.0,437.5" fill="none" stroke="#00e000" stroke-width="1.4" />
<polyline points="700.0,373.0 680.0,376.0 668.0,381.0 661.6,390.0 660.0,402.0 660.0,437.5" fill="none" stroke="#ffffff" stroke-width="1.3" />
<polyline points="712.0,372.0 690.0,376.5 674.0,382.0 666.0,390.0 663.4,402.0 663.2,437.5" fill="none" stroke="#00e000" stroke-width="1.4" />
<polyline points="606.0,366.5 634.0,366.5" fill="none" stroke="#ffffff" stroke-width="1.3" />
<polyline points="656.0,372.5 700.0,371.5 735.0,365.5" fill="none" stroke="#d8d8e0" stroke-width="1.3" />
<rect x="634.5" y="366.5" width="4.5" height="8" fill="#ffffff" shape-rendering="crispEdges"/>
<rect x="632" y="383" width="5" height="7" fill="#ffffff" shape-rendering="crispEdges"/>
<polyline points="580.0,373.0 604.0,376.5" fill="none" stroke="#d8d8e0" stroke-width="1.3" />
<polyline points="580.0,375.5 604.0,379.0" fill="none" stroke="#00e000" stroke-width="1.8" stroke-dasharray="9 4" />
<polyline points="735.0,366.5 712.0,372.0" fill="none" stroke="#00e000" stroke-width="1.4" />
<line x1="646.5" y1="57" x2="646.5" y2="232" stroke="#e8206c" stroke-width="1.6"/>
<line x1="646.5" y1="232" x2="646.5" y2="300" stroke="#e8206c" stroke-width="1.6"/>
<polyline points="646.5,300.0 646.5,400.0 648.0,440.0 648.5,473.0" fill="none" stroke="#e8206c" stroke-width="1.6" />
<polyline points="608.0,137.5 616.0,138.5 633.0,145.5" fill="none" stroke="#ff8c00" stroke-width="1.7" />
<polyline points="660.0,144.0 661.0,140.0 663.0,137.0" fill="none" stroke="#ff8c00" stroke-width="1.7" />
<polyline points="408.5,248.0 409.0,243.0 412.0,240.0" fill="none" stroke="#ff8c00" stroke-width="1.7" />
<polyline points="741.0,247.0 743.0,240.0 747.0,238.5" fill="none" stroke="#ff8c00" stroke-width="1.7" />
<polyline points="1181.0,247.0 1183.0,240.0 1187.0,238.0" fill="none" stroke="#ff8c00" stroke-width="1.7" />
<polyline points="369.0,282.0 372.0,291.0 378.0,296.0" fill="none" stroke="#ff8c00" stroke-width="1.7" />
<polyline points="859.0,283.0 861.0,291.0 866.0,296.0" fill="none" stroke="#ff8c00" stroke-width="1.7" />
<polyline points="1283.0,282.0 1285.0,291.0" fill="none" stroke="#ff8c00" stroke-width="1.7" />
<polyline points="632.0,402.0 634.0,409.0 631.0,413.0" fill="none" stroke="#ff8c00" stroke-width="1.7" />
<polyline points="662.0,402.0 665.0,412.0 671.0,416.0" fill="none" stroke="#ff8c00" stroke-width="1.7" />
<rect x="391.5" y="211.5" width="3" height="3" fill="#ff20ff" shape-rendering="crispEdges"/></g><g font-family="Liberation Sans, sans-serif"><text x="184" y="268.3" fill="#00c000" font-size="8.2" textLength="133" lengthAdjust="spacingAndGlyphs" stroke="#00c000" stroke-width=".35">US26 (HWY 047) SUNSET HIGHWAY</text>
<text x="720" y="271.5" fill="#00c000" font-size="8.2" textLength="131" lengthAdjust="spacingAndGlyphs" stroke="#00c000" stroke-width=".35">US26 (HWY 047) SUNSET HIGHWAY</text>
<text x="1182" y="271.5" fill="#00c000" font-size="8.2" textLength="131" lengthAdjust="spacingAndGlyphs" stroke="#00c000" stroke-width=".35">US26 (HWY 047) SUNSET HIGHWAY</text>
<text x="633" y="245.1" fill="#00c000" font-size="8.2" textLength="93.5" lengthAdjust="spacingAndGlyphs" stroke="#00c000" stroke-width=".35">JACKSON SCHOOL ROAD</text>
<text x="246" y="213.5" fill="#b8b800" font-size="5.2" textLength="21" lengthAdjust="spacingAndGlyphs" >EXTL R/W</text>
<text x="879" y="191" fill="#b8b800" font-size="5.2" textLength="21" lengthAdjust="spacingAndGlyphs" >EXTL R/W</text>
<text x="1172" y="222.5" fill="#b8b800" font-size="5.2" textLength="21" lengthAdjust="spacingAndGlyphs" >EXTL R/W</text>
<text x="303" y="345" fill="#b8b800" font-size="5.2" textLength="21" lengthAdjust="spacingAndGlyphs" >EXTL R/W</text>
<text x="517" y="400" fill="#b8b800" font-size="5.2" textLength="21" lengthAdjust="spacingAndGlyphs" >EXTL R/W</text>
<text x="1036" y="312.5" fill="#b8b800" font-size="5.2" textLength="21" lengthAdjust="spacingAndGlyphs" >EXTL R/W</text>
<text x="575" y="134.5" fill="#a8a8a8" font-size="4.6" textLength="32" lengthAdjust="spacingAndGlyphs" >Sta. "JS" 11+70.68</text>
<text x="575" y="139" fill="#a8a8a8" font-size="4.6" textLength="27" lengthAdjust="spacingAndGlyphs" >begin const. overlay</text>
<text x="663" y="134.5" fill="#a8a8a8" font-size="4.6" textLength="33" lengthAdjust="spacingAndGlyphs" >Sta. "JS" 12+14.18</text>
<text x="663" y="139" fill="#a8a8a8" font-size="4.6" textLength="33" lengthAdjust="spacingAndGlyphs" >Begin bridge overlay</text>
<text x="594" y="406.5" fill="#a8a8a8" font-size="4.6" textLength="36" lengthAdjust="spacingAndGlyphs" >Sta. "JS" 6+47.59 - 12.00</text>
<text x="594" y="410.8" fill="#a8a8a8" font-size="4.6" textLength="25" lengthAdjust="spacingAndGlyphs" >end const. overlay</text>
<text x="670" y="411" fill="#a8a8a8" font-size="4.6" textLength="36" lengthAdjust="spacingAndGlyphs" >Sta. "JS" 7+18.51 - 11.00</text>
<text x="670" y="415.3" fill="#a8a8a8" font-size="4.6" textLength="30" lengthAdjust="spacingAndGlyphs" >begin const. overlay</text>
<text x="609" y="188" fill="#b8b800" font-size="4.4" textLength="8" lengthAdjust="spacingAndGlyphs" >NC 1</text>
<text x="609" y="192.2" fill="#b8b800" font-size="4.4" textLength="20" lengthAdjust="spacingAndGlyphs" >R=1432.69</text>
<text x="609" y="196.4" fill="#b8b800" font-size="4.4" textLength="18" lengthAdjust="spacingAndGlyphs" >L=181.04</text>
<text x="609" y="200.6" fill="#b8b800" font-size="4.4" textLength="14" lengthAdjust="spacingAndGlyphs" >T=90.64</text>
<text x="610" y="204.8" fill="#b8b800" font-size="4.4" textLength="6" lengthAdjust="spacingAndGlyphs" >E=2</text>
<text x="668" y="188" fill="#b8b800" font-size="4.4" textLength="8" lengthAdjust="spacingAndGlyphs" >NC 1</text>
<text x="668" y="192.2" fill="#b8b800" font-size="4.4" textLength="20" lengthAdjust="spacingAndGlyphs" >R=1432.69</text>
<text x="668" y="196.4" fill="#b8b800" font-size="4.4" textLength="18" lengthAdjust="spacingAndGlyphs" >L=181.04</text>
<text x="668" y="200.6" fill="#b8b800" font-size="4.4" textLength="14" lengthAdjust="spacingAndGlyphs" >T=90.64</text>
<text x="669" y="204.8" fill="#b8b800" font-size="4.4" textLength="6" lengthAdjust="spacingAndGlyphs" >E=2</text>
<text x="609" y="325" fill="#b8b800" font-size="4.4" textLength="8" lengthAdjust="spacingAndGlyphs" >NC 1</text>
<text x="609" y="329.2" fill="#b8b800" font-size="4.4" textLength="20" lengthAdjust="spacingAndGlyphs" >R=1432.69</text>
<text x="609" y="333.4" fill="#b8b800" font-size="4.4" textLength="18" lengthAdjust="spacingAndGlyphs" >L=181.04</text>
<text x="609" y="337.6" fill="#b8b800" font-size="4.4" textLength="14" lengthAdjust="spacingAndGlyphs" >T=90.64</text>
<text x="610" y="341.8" fill="#b8b800" font-size="4.4" textLength="6" lengthAdjust="spacingAndGlyphs" >E=2</text>
<text x="684" y="330" fill="#b8b800" font-size="4.4" textLength="8" lengthAdjust="spacingAndGlyphs" >NC 1</text>
<text x="684" y="334.2" fill="#b8b800" font-size="4.4" textLength="20" lengthAdjust="spacingAndGlyphs" >R=1432.69</text>
<text x="684" y="338.4" fill="#b8b800" font-size="4.4" textLength="18" lengthAdjust="spacingAndGlyphs" >L=181.04</text>
<text x="684" y="342.6" fill="#b8b800" font-size="4.4" textLength="14" lengthAdjust="spacingAndGlyphs" >T=90.64</text>
<text x="685" y="346.8" fill="#b8b800" font-size="4.4" textLength="6" lengthAdjust="spacingAndGlyphs" >E=2</text>
<text x="159" y="246" fill="#c80000" font-size="5.6" textLength="58" lengthAdjust="spacingAndGlyphs" transform="rotate(-90 159 246)" >STA. 580+00</text>
<text x="159" y="314" fill="#c80000" font-size="5.6" textLength="22" lengthAdjust="spacingAndGlyphs" transform="rotate(-90 159 314)" >STA. 580+00</text>
<text x="471.5" y="245" fill="#c80000" font-size="5.6" textLength="25" lengthAdjust="spacingAndGlyphs" transform="rotate(-90 471.5 245)" >STA. 580+00</text>
<text x="471.5" y="314" fill="#c80000" font-size="5.6" textLength="20" lengthAdjust="spacingAndGlyphs" transform="rotate(-90 471.5 314)" >STA. 580+00</text>
<text x="627.5" y="235" fill="#c80000" font-size="5.6" textLength="16" lengthAdjust="spacingAndGlyphs" transform="rotate(-90 627.5 235)" >STA. 580+00</text>
<text x="627.5" y="314" fill="#c80000" font-size="5.6" textLength="20" lengthAdjust="spacingAndGlyphs" transform="rotate(-90 627.5 314)" >STA. 580+00</text>
<text x="785" y="245" fill="#c80000" font-size="5.6" textLength="25" lengthAdjust="spacingAndGlyphs" transform="rotate(-90 785 245)" >STA. 580+00</text>
<text x="785" y="314" fill="#c80000" font-size="5.6" textLength="20" lengthAdjust="spacingAndGlyphs" transform="rotate(-90 785 314)" >STA. 580+00</text>
<text x="1099" y="246" fill="#c80000" font-size="5.6" textLength="26" lengthAdjust="spacingAndGlyphs" transform="rotate(-90 1099 246)" >STA. 580+00</text>
<text x="1099" y="314" fill="#c80000" font-size="5.6" textLength="20" lengthAdjust="spacingAndGlyphs" transform="rotate(-90 1099 314)" >STA. 580+00</text>
<text x="315" y="245" fill="#c80000" font-size="5.6" textLength="39" lengthAdjust="spacingAndGlyphs" transform="rotate(-90 315 245)" >STA. 580+00</text>
<text x="315" y="315" fill="#c80000" font-size="5.6" textLength="22" lengthAdjust="spacingAndGlyphs" transform="rotate(-90 315 315)" >STA. 580+00</text>
<text x="941" y="246" fill="#c80000" font-size="5.6" textLength="39" lengthAdjust="spacingAndGlyphs" transform="rotate(-90 941 246)" >STA. 580+00</text>
<text x="941" y="314" fill="#c80000" font-size="5.6" textLength="20" lengthAdjust="spacingAndGlyphs" transform="rotate(-90 941 314)" >STA. 580+00</text>
<text x="1255" y="246" fill="#c80000" font-size="5.6" textLength="26" lengthAdjust="spacingAndGlyphs" transform="rotate(-90 1255 246)" >STA. 580+00</text>
<text x="1255" y="314" fill="#c80000" font-size="5.6" textLength="20" lengthAdjust="spacingAndGlyphs" transform="rotate(-90 1255 314)" >STA. 580+00</text>
<text x="313" y="215" fill="#b8b800" font-size="5.4" textLength="34" lengthAdjust="spacingAndGlyphs" transform="rotate(-90 313 215)" >OW'1"LBL</text>
<text x="948.5" y="220" fill="#b8b800" font-size="5.4" textLength="25" lengthAdjust="spacingAndGlyphs" transform="rotate(-90 948.5 220)" >OW'1"LBL</text>
<text x="250" y="331" fill="#b8b800" font-size="5.4" textLength="29" lengthAdjust="spacingAndGlyphs" transform="rotate(-90 250 331)" >OW'1"LBL</text>
<text x="403.5" y="345" fill="#b8b800" font-size="5.4" textLength="30" lengthAdjust="spacingAndGlyphs" transform="rotate(-90 403.5 345)" >OW'1"LBL</text>
<text x="614" y="156" fill="#b8b800" font-size="5.4" textLength="21" lengthAdjust="spacingAndGlyphs" transform="rotate(-90 614 156)" >OW'1"LBL</text>
<text x="701.5" y="404" fill="#b8b800" font-size="5.4" textLength="25" lengthAdjust="spacingAndGlyphs" transform="rotate(-90 701.5 404)" >OW'1"LBL</text>
<text x="1160.5" y="325" fill="#b8b800" font-size="5.4" textLength="25" lengthAdjust="spacingAndGlyphs" transform="rotate(-90 1160.5 325)" >OW'1"LBL</text>
<text x="1006" y="334" fill="#b8b800" font-size="5.4" textLength="26" lengthAdjust="spacingAndGlyphs" transform="rotate(-90 1006 334)" >OW'1"LBL</text>
<text x="856" y="362" fill="#b8b800" font-size="5.4" textLength="26" lengthAdjust="spacingAndGlyphs" transform="rotate(-90 856 362)" >OW'1"LBL</text>
<text x="550" y="401" fill="#b8b800" font-size="5.4" textLength="20" lengthAdjust="spacingAndGlyphs" transform="rotate(-72 550 401)" >OW 1 LBL</text>
<text x="462" y="201" fill="#b8b800" font-size="5.4" textLength="26" lengthAdjust="spacingAndGlyphs" transform="rotate(-78 462 201)" >589.1 BL</text>
<text x="797" y="182" fill="#b8b800" font-size="5.4" textLength="25" lengthAdjust="spacingAndGlyphs" transform="rotate(-62 797 182)" >589.1 BL</text>
<text x="124.5" y="200" fill="#b8b800" font-size="4.6" textLength="36" lengthAdjust="spacingAndGlyphs" transform="rotate(-88 124.5 200)" >N 0'16'42" E  1320.5</text>
<text x="122.5" y="366" fill="#b8b800" font-size="4.6" textLength="60" lengthAdjust="spacingAndGlyphs" transform="rotate(-94 122.5 366)" >N 0'16'42" E  1320.5</text>
<text x="1092.5" y="200" fill="#b8b800" font-size="4.6" textLength="34" lengthAdjust="spacingAndGlyphs" transform="rotate(-94 1092.5 200)" >N 0'30'12" E</text>
<text x="1281" y="364" fill="#b8b800" font-size="4.6" textLength="70" lengthAdjust="spacingAndGlyphs" transform="rotate(-90 1281 364)" >N 0'30'12" E  1318.2</text>
<text x="603.5" y="213" fill="#b8b800" font-size="4.4" textLength="40" lengthAdjust="spacingAndGlyphs" transform="rotate(-100 603.5 213)" >S 8'21'17" W</text>
<text x="697.5" y="205" fill="#b8b800" font-size="4.4" textLength="38" lengthAdjust="spacingAndGlyphs" transform="rotate(-83 697.5 205)" >S 8'21'17" W</text>
<text x="195" y="238" fill="#b8b800" font-size="4.6" textLength="17" lengthAdjust="spacingAndGlyphs" transform="rotate(-4 195 238)" >34+00.00</text>
<text x="321" y="236.5" fill="#b8b800" font-size="4.6" textLength="17" lengthAdjust="spacingAndGlyphs" transform="rotate(-6 321 236.5)" >34+00.00</text>
<text x="473" y="201" fill="#b8b800" font-size="4.6" textLength="17" lengthAdjust="spacingAndGlyphs" transform="rotate(-24 473 201)" >34+00.00</text>
<text x="700" y="153" fill="#b8b800" font-size="4.6" textLength="17" lengthAdjust="spacingAndGlyphs" transform="rotate(4 700 153)" >34+00.00</text>
<text x="808" y="194" fill="#b8b800" font-size="4.6" textLength="17" lengthAdjust="spacingAndGlyphs" transform="rotate(21 808 194)" >34+00.00</text>
<text x="948" y="241" fill="#b8b800" font-size="4.6" textLength="17" lengthAdjust="spacingAndGlyphs" transform="rotate(5 948 241)" >34+00.00</text>
<text x="1023" y="247" fill="#b8b800" font-size="4.6" textLength="17" lengthAdjust="spacingAndGlyphs" transform="rotate(4 1023 247)" >34+00.00</text>
<text x="171" y="296" fill="#b8b800" font-size="4.6" textLength="17" lengthAdjust="spacingAndGlyphs" transform="rotate(4 171 296)" >34+00.00</text>
<text x="296" y="303" fill="#b8b800" font-size="4.6" textLength="17" lengthAdjust="spacingAndGlyphs" transform="rotate(4 296 303)" >34+00.00</text>
<text x="555" y="366" fill="#b8b800" font-size="4.6" textLength="17" lengthAdjust="spacingAndGlyphs" transform="rotate(22 555 366)" >34+00.00</text>
<text x="918" y="309" fill="#b8b800" font-size="4.6" textLength="17" lengthAdjust="spacingAndGlyphs" transform="rotate(-10 918 309)" >34+00.00</text>
<text x="1148" y="295" fill="#b8b800" font-size="4.6" textLength="17" lengthAdjust="spacingAndGlyphs" transform="rotate(-3 1148 295)" >34+00.00</text>
<text x="225" y="291" fill="#b8b800" font-size="4.6" textLength="17" lengthAdjust="spacingAndGlyphs" transform="rotate(-25 225 291)" >34+00.00</text>
<text x="414" y="240.5" fill="#c80000" font-size="4.6" textLength="17" lengthAdjust="spacingAndGlyphs" >Std. Lane</text>
<text x="749" y="239.5" fill="#c80000" font-size="4.6" textLength="17" lengthAdjust="spacingAndGlyphs" >Std. Lane</text>
<text x="1189" y="239" fill="#c80000" font-size="4.6" textLength="17" lengthAdjust="spacingAndGlyphs" >Std. Lane</text>
<text x="380" y="297" fill="#c80000" font-size="4.6" textLength="17" lengthAdjust="spacingAndGlyphs" >Std. Lane</text>
<text x="868" y="297" fill="#c80000" font-size="4.6" textLength="17" lengthAdjust="spacingAndGlyphs" >Std. Lane</text>
<g shape-rendering="auto">
<polygon points="37.5,488.1 64,499.2 53.8,500.1 65.7,521.9 49.5,530.9 37.5,508.2 32.4,516.8" fill="#062c06" stroke="#10ac10" stroke-width="1.1" stroke-linejoin="miter"/>
<polygon points="114,511.6 85.4,506.5 94.4,511.2 71.3,523.6 80.3,539.8 102,528.3 102.5,538.1" fill="#340404" stroke="#bc1212" stroke-width="1.1"/>
<path d="M40.9,508.6 L49.9,513.3 L52,502.6 M49.9,513.3 L53.8,519.3" stroke="#9cb09c" stroke-width="1.9" fill="none"/>
<path d="M79.8,521.9 L99.5,525.3 M94.4,515.5 L85.8,533" stroke="#b49494" stroke-width="1.9" fill="none"/>
<circle cx="64.3" cy="538.1" r="8.8" fill="#06062c" stroke="#2222b8" stroke-width="1.4"/>
<polygon points="64.3,534.8 67.6,538.1 64.3,541.4 61,538.1" fill="#3434ff"/>
</g></g></g></svg>
<svg class="abs" style="left:0;top:0" width="1287" height="60" viewBox="0 0 1287 60" font-family="Liberation Sans, sans-serif">
<path d="M7.5,14.5 h10 l3.5,3.5 v9 h-13.5 z" fill="#c4d4e8" stroke="#d8e4f2" stroke-width="1.2" opacity=".9"/><rect x="10" y="17" width="7" height="7" fill="#484848"/>
<text x="30" y="26" font-size="12.6" fill="#1a0a20" textLength="78" lengthAdjust="spacingAndGlyphs">View 1, Default</text>
<rect x="8.5" y="38.5" width="15" height="13" fill="#f4f8ff" stroke="#1f86e0" stroke-width="1.3"/><rect x="8" y="38" width="16" height="3" fill="#1f86e0"/>
<circle cx="14.5" cy="48.5" r="4" fill="#1f86e0"/><rect x="14" y="47.5" width="1.2" height="3.5" fill="#fff"/><rect x="14" y="45.5" width="1.2" height="1.2" fill="#fff"/>
<rect x="19.5" y="45.5" width="4" height="6" fill="#f4f8ff" stroke="#1f86e0" stroke-width=".9"/><path d="M20,48.5 h3" stroke="#1f86e0" stroke-width=".8"/>
<polygon points="31,42.5 38.5,42.5 34.7,47" fill="#000"/>
<path d="M52,36.5 l7,1.5 l1.5,8 l-3,6 l-7,2 l-5.5,-3.5 l1.5,-9 z" fill="#fff8ee" stroke="#f08a1c" stroke-width="1.3" stroke-linejoin="round"/>
<path d="M52.5,39.5 l5,-1 l1.5,1.5 v7 l-5,1.5 l-1.5,-1.5 z" fill="#a8dc90" stroke="#58a838" stroke-width="1"/><path d="M54,41 v7.5 M54,41 l5,-1.2" stroke="#58a838" stroke-width=".8" fill="none"/>
<circle cx="50.5" cy="48" r="4.3" fill="#a8d8fc" stroke="#1f86e0" stroke-width="1.3"/><circle cx="49.3" cy="46.8" r="1.5" fill="#e8f6ff"/>
<polygon points="56.5,50.5 62.5,50.5 59.5,54" fill="#000"/>
<g stroke="#909090" stroke-width="1.1"><path d="M75,35.5 v3 M75,51.5 v3 M66,45 h3 M81,45 h3 M68.5,38.5 l2.2,2.2 M81.5,38.5 l-2.2,2.2 M68.5,51.5 l2.2,-2.2 M81.5,51.5 l-2.2,-2.2"/></g>
<path d="M71,42.5 l4.5,-2 l4,2 v5.5 l-4,2 l-4.5,-2 z" fill="#fff6ea" stroke="#f08a1c" stroke-width="1.2" stroke-linejoin="round"/><path d="M75.3,45 l4.2,-2.3 v5.3 l-4.2,2 z" fill="#f08a1c"/>
<polygon points="90,42.5 97.5,42.5 93.7,47" fill="#000"/>
<rect x="103" y="34.5" width="1" height="20.5" fill="#9a9a9a"/>
<path d="M117.3,36 q1.2,-1 2.4,0 v8.5 h-2.4 z" fill="#1f86e0"/><path d="M114,44.5 h9 v3 h-9 z" fill="#1f86e0"/><path d="M114.5,47.5 h8 l1,5 h-11.5 z" fill="#a4a8ac"/><path d="M112,52.5 h11.5" stroke="#8c9094" stroke-width="1"/>
<path d="M138.8,47.5 l-6,6" stroke="#f08a1c" stroke-width="2.6" stroke-linecap="round"/>
<circle cx="142" cy="43" r="4.7" fill="#f4f4f4" stroke="#1c2c3c" stroke-width="1.5"/>
<path d="M139.3,43 h5.4" stroke="#1c2c3c" stroke-width="1.3"/>
<path d="M142,40.3 v5.4" stroke="#1c2c3c" stroke-width="1.3"/>
<path d="M161.3,47.5 l-6,6" stroke="#f08a1c" stroke-width="2.6" stroke-linecap="round"/>
<circle cx="164.5" cy="43" r="4.7" fill="#f4f4f4" stroke="#1c2c3c" stroke-width="1.5"/>
<path d="M161.8,43 h5.4" stroke="#1c2c3c" stroke-width="1.3"/>
<rect x="176.5" y="37.5" width="14.5" height="14.5" fill="none" stroke="#000" stroke-width="1.3" stroke-dasharray="1.5 1.5"/>
<path d="M183.5,47.5 l-5.5,5.5" stroke="#f08a1c" stroke-width="2.6" stroke-linecap="round"/><circle cx="187" cy="42.5" r="4.7" fill="#f4f4f4" stroke="#1c2c3c" stroke-width="1.5"/>
<rect x="198.5" y="37" width="14.5" height="14" fill="#f8fbff" stroke="#1f86e0" stroke-width="1.4"/><rect x="198" y="36.5" width="15.5" height="2.5" fill="#1f86e0"/>
<g fill="#1f86e0"><polygon points="201,41 204,41 201,44"/><polygon points="210.5,41 207.5,41 210.5,44"/><polygon points="201,49 204,49 201,46"/><polygon points="210.5,49 207.5,49 210.5,46"/></g>
<path d="M224,37.5 q9,-1 10,7 q0,6 -6,8" fill="none" stroke="#1f86e0" stroke-width="2.2"/><path d="M221,45.5 l6.5,-4 v2.8 h4 v2.6 h-4 v2.8 z" fill="#1f86e0"/><path d="M230,38 q-5,6 -2,14.5" fill="none" stroke="#8cc4f4" stroke-width="1.5"/>
<path d="M246,44 l-2.5,-4.5 q1,-1.5 2.5,0 l2,3 l-.5,-5.5 q1.5,-1.2 2.5,0 l1,5 l.7,-4.5 q1.5,-1 2.3,.3 l.3,5 l1,-3 q1.3,-.6 2,.5 l-.3,7.5 q-.5,4 -3.5,5.5 h-4.5 q-2,-1 -3.5,-4 l-2.5,-4.5 q1.2,-1.6 3,-.8 z" fill="#fbfbfb" stroke="#404040" stroke-width="1.1" stroke-linejoin="round"/>
<rect x="263" y="34.5" width="1" height="20.5" fill="#9a9a9a"/>
<rect x="270.5" y="39" width="14.5" height="10.5" fill="#f8fbff" stroke="#1f86e0" stroke-width="1.5"/><rect x="270.0" y="38.3" width="15.5" height="2.5" fill="#1f86e0"/>
<path d="M273.25,45.3 l4,-3.2 v2 h4.5 v2.4 h-4.5 v2 z" fill="#1f86e0"/>
<rect x="292.5" y="39" width="14.5" height="10.5" fill="#f8fbff" stroke="#1f86e0" stroke-width="1.5"/><rect x="292.0" y="38.3" width="15.5" height="2.5" fill="#1f86e0"/>
<path d="M304.25,45.3 l-4,-3.2 v2 h-4.5 v2.4 h4.5 v2 z" fill="#1f86e0"/>
<rect x="313" y="34.5" width="1" height="20.5" fill="#9a9a9a"/>
<rect x="326.5" y="37.5" width="9" height="7.5" fill="#f8fbff" stroke="#1f86e0" stroke-width="1.4"/><rect x="326" y="37" width="10" height="2" fill="#1f86e0"/>
<rect x="320.5" y="43.5" width="9.5" height="7.5" fill="#f8fbff" stroke="#1f86e0" stroke-width="1.4"/><rect x="320" y="43" width="10.5" height="2" fill="#1f86e0"/>
<path d="M331.5,50.5 h3 v-3" stroke="#000" stroke-width="1.3" fill="none"/><polygon points="332.5,47.5 336.5,47.5 334.5,45.5" fill="#000"/>
<path d="M343,41 l5,-3.5 l6,1.5 l1,5 l-4.5,4 l-6,-1.5 z" fill="#f4faff" stroke="#1f86e0" stroke-width="1.4" stroke-linejoin="round"/>
<path d="M347.5,41.5 l6,8.5 M357,41.5 l-6,8.5" stroke="#303030" stroke-width="1.3"/><circle cx="350" cy="51.5" r="1.7" fill="none" stroke="#303030" stroke-width="1.1"/>
<polygon points="353.5,50.5 359,50.5 356.2,53.5" fill="#000"/>
<path d="M365,40.5 l5,-3.5 l6,1.5 l1,5 l-4.5,4 l-6,-1.5 z" fill="#f4faff" stroke="#1f86e0" stroke-width="1.4" stroke-linejoin="round"/>
<rect x="368.5" y="43.5" width="11" height="7.5" fill="#f0f0f0" stroke="#303030" stroke-width="1.2" stroke-dasharray="2 1.5"/>
</svg>
<div class="abs" style="left:1192px;top:12px;width:28px;height:18px;background:linear-gradient(#dbe6f2,#c4d3e6);border:1px solid #5a6a80;border-radius:3px"></div>
<div class="abs" style="left:1222px;top:12px;width:28px;height:18px;background:linear-gradient(#dbe6f2,#c4d3e6);border:1px solid #5a6a80;border-radius:3px"></div>
<div class="abs" style="left:1251px;top:12px;width:32px;height:18px;background:linear-gradient(#e8a090 0%,#d87860 45%,#c44428 50%,#d06040 100%);border:1px solid #4a1818;border-radius:3px"></div>
<svg class="abs" style="left:1259px;top:14px" width="22" height="14"><path d="M4,3 l8,8 M12,3 l-8,8" stroke="#5a3030" stroke-width="4.2" stroke-linecap="round"/><path d="M4,3 l8,8 M12,3 l-8,8" stroke="#f4f4f8" stroke-width="2.6" stroke-linecap="round"/></svg>
<div class="abs" style="left:990px;top:14px;width:274px;height:120px;background:#f0f0f0;border:1px solid #7a7a7a;border-top-color:#b0b0b0"></div>
<div class="abs" style="left:991px;top:15px;width:272px;height:30px;background:#fff"></div>
<svg class="abs" style="left:0;top:0" width="1287" height="140" viewBox="0 0 1287 140" font-family="Liberation Sans, sans-serif">
<path d="M999,36.5 l8,-9 q-1.5,-4 2,-6 l1,3 l3,0 l1,-2.5 q1.5,3.5 -2,6 l-2.5,-.5 l-7,9.5 q-2.5,1.5 -3.5,-.5 z" fill="#9a9a9a" stroke="#5a5a5a" stroke-width="1"/>
<circle cx="1010" cy="33" r="3.4" fill="#e8e8e8" stroke="#6a6a6a" stroke-width="1.3"/><circle cx="1010" cy="33" r="1.2" fill="#6a6a6a"/><path d="M1010,28.5 v1.5 M1010,36 v1.5 M1005.5,33 h1.5 M1013,33 h1.5" stroke="#6a6a6a" stroke-width="1.3"/>
<text x="1020" y="34" font-size="12.5" fill="#000" textLength="94" lengthAdjust="spacingAndGlyphs">Element Selection</text>
<rect x="1143" y="28.5" width="11" height="1.2" fill="#000"/>
<rect x="1189.5" y="24.5" width="9" height="9" fill="none" stroke="#c0c0c0" stroke-width="1"/>
<path d="M1235,24 l10.5,10.5 M1245.5,24 l-10.5,10.5" stroke="#000" stroke-width="1.2"/>
<rect x="1002.5" y="57.5" width="109" height="25" fill="#f0f0f0" stroke="#fff"/><path d="M1002.5,82.5 v-25 h109" fill="none" stroke="#a0a0a0"/>
<rect x="1005.5" y="60.5" width="19" height="20" fill="#8fbce8" stroke="#1f78d0"/>
<rect x="1002.5" y="98.5" width="109" height="25" fill="#f0f0f0" stroke="#fff"/><path d="M1002.5,123.5 v-25 h109" fill="none" stroke="#a0a0a0"/>
<rect x="1005.5" y="101.5" width="19" height="20" fill="#8fbce8" stroke="#1f78d0"/>
<g stroke="#fff" stroke-width="2.6" fill="none"><circle cx="1014.7" cy="70.5" r="4.6"/><path d="M1014.7,63.5 v14 M1007.7,70.5 h14"/></g>
<g stroke="#1f86e0" stroke-width="1.1" fill="none"><circle cx="1014.7" cy="70.5" r="4.6"/><path d="M1014.7,63.5 v14 M1007.7,70.5 h14"/></g>
<rect x="1029.5" y="66.5" width="13.5" height="7.5" fill="none" stroke="#1f86e0" stroke-width="1.3" stroke-dasharray="3.5 1.5"/>
<path d="M1053.5,66.5 h10 l-3.5,7.5 h-10 z" fill="none" stroke="#1f86e0" stroke-width="1.3" stroke-dasharray="3.5 1.5"/>
<circle cx="1078" cy="70" r="6.8" fill="none" stroke="#1f86e0" stroke-width="1.3" stroke-dasharray="3.5 1.8"/>
<path d="M1092,77 l14,-14" stroke="#1f86e0" stroke-width="1.5" stroke-dasharray="4 2"/>
<defs><linearGradient id="bg1" x1="0" y1="0" x2="1" y2="1"><stop offset="0" stop-color="#5aaef0"/><stop offset="1" stop-color="#1060b0"/></linearGradient><linearGradient id="gg1" x1="0" y1="0" x2="1" y2="1"><stop offset="0" stop-color="#c4c4c4"/><stop offset="1" stop-color="#909090"/></linearGradient></defs>
<rect x="1134.5" y="59.5" width="15" height="15" fill="url(#bg1)" stroke="#000" stroke-width="1.2"/>
<circle cx="1150" cy="75.3" r="4.8" fill="#fff" stroke="#e01010" stroke-width="2"/><path d="M1146.7,72 l6.6,6.6" stroke="#e01010" stroke-width="2"/>
<g stroke="#f4faff" stroke-width="1.1"><path d="M1013.5,103.5 v10 M1008.5,108.5 h10 M1010,105 l7,7 M1017,105 l-7,7"/></g>
<path d="M1013.5,107 v11.5 l2.7,-2.6 l2,4.4 l2.1,-1 l-2,-4.3 h3.8 z" fill="#000"/>
<path d="M1036,104 v14 M1029,111 h14" stroke="#1f86e0" stroke-width="3.6" stroke-linecap="round"/>
<path d="M1051.5,111 h11.5" stroke="#1f86e0" stroke-width="3.6" stroke-linecap="round"/>
<rect x="1071.5" y="104.5" width="13.5" height="13.5" fill="#fff" stroke="#1f86e0" stroke-width="1.3"/><polygon points="1085,104.5 1085,118 1071.5,118" fill="#1f86e0"/>
<circle cx="1099" cy="111" r="7.3" fill="none" stroke="#1f86e0" stroke-width="1.5" stroke-dasharray="3.5 1.8"/><g fill="#505860"><circle cx="1099" cy="108" r="1.3"/><circle cx="1096" cy="113" r="1.3"/><circle cx="1102" cy="113" r="1.3"/></g>
<rect x="1134.5" y="100.5" width="15" height="15" fill="url(#gg1)" stroke="#a8a8a8" stroke-width="1"/>
<path d="M1148.5,107.5 v12 l2.8,-2.7 l2.1,4.6 l2.2,-1 l-2.1,-4.5 h4 z" fill="#787878" stroke="#a0a0a0" stroke-width=".5"/>
<polygon points="1241,114.5 1250,114.5 1245.5,120" fill="#000"/>
</svg>
<div class="abs" style="left:6px;top:652px;width:27px;height:27px;background:#8fbce8;border:1px solid #1f78d0;"></div>
<div class="abs" style="left:50px;top:654px;width:1px;height:24px;background:#a8a8a8;"></div>
<div class="abs" style="left:562px;top:657px;width:88px;height:18px;background:#e1e1e1;border:1px solid #adadad;"></div>
<div class="abs" style="left:6px;top:682px;width:123px;height:193px;background:#fff;border:1px solid #828790;"></div>
<div class="abs" style="left:7px;top:683px;width:121px;height:20px;background:#fff;border:1px solid #a0a0a0;border-width:0 1px 2px 0;border-color:#b0b0b0"></div>
<div class="abs" style="left:125px;top:683px;width:1px;height:19px;background:#d0d0d0;"></div>
<div class="abs" style="left:44px;top:705px;width:82px;height:17px;background:#e4e4e4;border:1px solid #a8a8a8;"></div>
<div class="abs" style="left:7px;top:856px;width:121px;height:17px;background:#f0f0f0;"></div>
<div class="abs" style="left:24px;top:856px;width:46px;height:17px;background:#cdcdcd;"></div>
<div class="abs" style="left:136px;top:682px;width:1150px;height:115px;background:#fff;border:1px solid #828790;"></div>
<div class="abs" style="left:179px;top:684px;width:1px;height:19px;background:#e0e0e0;"></div>
<div class="abs" style="left:208px;top:684px;width:1px;height:19px;background:#e0e0e0;"></div>
<div class="abs" style="left:236.5px;top:684px;width:1px;height:19px;background:#e0e0e0;"></div>
<div class="abs" style="left:485px;top:684px;width:1px;height:19px;background:#e0e0e0;"></div>
<div class="abs" style="left:565px;top:684px;width:1px;height:19px;background:#e0e0e0;"></div>
<div class="abs" style="left:722px;top:684px;width:1px;height:19px;background:#e0e0e0;"></div>
<div class="abs" style="left:866px;top:684px;width:1px;height:19px;background:#e0e0e0;"></div>
<div class="abs" style="left:993px;top:684px;width:1px;height:19px;background:#e0e0e0;"></div>
<div class="abs" style="left:1075px;top:684px;width:1px;height:19px;background:#e0e0e0;"></div>
<div class="abs" style="left:1202px;top:684px;width:1px;height:19px;background:#e0e0e0;"></div>
<div class="abs" style="left:1231px;top:684px;width:1px;height:19px;background:#e0e0e0;"></div>
<div class="abs" style="left:1260px;top:684px;width:1px;height:19px;background:#e0e0e0;"></div>
<div class="abs" style="left:1231.5px;top:706px;width:29px;height:68px;background:#e6e6e6;"></div>
<div class="abs" style="left:566.5px;top:722px;width:28.5px;height:53px;background:#ffff80;"></div>
<div class="abs" style="left:137px;top:781px;width:1148px;height:15px;background:#f0f0f0;"></div>
<div class="abs" style="left:154px;top:781px;width:1069px;height:15px;background:#cdcdcd;"></div>
<div class="abs" style="left:136px;top:797px;width:1150px;height:78px;background:#f0f0f0;border:1px solid #c8c8c8;border-width:1px 0 0 1px"></div>
<div class="abs" style="left:179px;top:805px;width:144px;height:18px;background:#f0f0f0;border:1px solid #9ab4d4;box-shadow:inset 0 0 0 1px #dfe8f4"></div>
<div class="abs" style="left:335px;top:805px;width:144px;height:18px;background:#f0f0f0;border:1px solid #9ab4d4;box-shadow:inset 0 0 0 1px #dfe8f4"></div>
<div class="abs" style="left:534px;top:805px;width:99px;height:18px;background:#f0f0f0;border:1px solid #9ab4d4;box-shadow:inset 0 0 0 1px #dfe8f4"></div>
<div class="abs" style="left:685px;top:805px;width:144px;height:18px;background:#f0f0f0;border:1px solid #9ab4d4;box-shadow:inset 0 0 0 1px #dfe8f4"></div>
<div class="abs" style="left:845px;top:805px;width:144px;height:18px;background:#f0f0f0;border:1px solid #9ab4d4;box-shadow:inset 0 0 0 1px #dfe8f4"></div>
<div class="abs" style="left:149px;top:828px;width:20px;height:20px;background:#8fbce8;border:1px solid #1f78d0;"></div>
<div class="abs" style="left:170px;top:828px;width:20px;height:20px;background:#8fbce8;border:1px solid #1f78d0;"></div>
<div class="abs" style="left:191px;top:828px;width:20px;height:20px;background:#8fbce8;border:1px solid #1f78d0;"></div>
<div class="abs" style="left:233px;top:828px;width:20px;height:20px;background:#8fbce8;border:1px solid #1f78d0;"></div>
<div class="abs" style="left:317px;top:828px;width:20px;height:20px;background:#8fbce8;border:1px solid #1f78d0;"></div>
<div class="abs" style="left:359px;top:828px;width:20px;height:20px;background:#8fbce8;border:1px solid #1f78d0;"></div>
<div class="abs" style="left:401px;top:828px;width:20px;height:20px;background:#8fbce8;border:1px solid #1f78d0;"></div>
<div class="abs" style="left:580px;top:828px;width:127px;height:19px;background:#cccccc;border:1px solid #c4c4c4;"></div>
<div class="abs" style="left:797px;top:829px;width:40px;height:17px;background:#f0f0f0;border:1px solid #9ab4d4;box-shadow:inset 0 0 0 1px #dfe8f4"></div>
<div class="abs" style="left:942px;top:828px;width:65px;height:19px;background:#cccccc;border:1px solid #c4c4c4;"></div>
<div class="abs" style="left:1117px;top:828px;width:108px;height:19px;background:#cccccc;border:1px solid #c4c4c4;"></div>
<div class="abs" style="left:234.5px;top:852px;width:105px;height:19px;background:#cccccc;border:1px solid #c4c4c4;"></div>
<div class="abs" style="left:10px;top:876px;width:1px;height:6px;background:#606060;"></div>
<div class="abs" style="left:11px;top:876px;width:58px;height:6px;background:#e8eef4;"></div>
<div class="abs" style="left:80px;top:876px;width:1px;height:6px;background:#505050;"></div>
<div class="abs" style="left:83px;top:876px;width:1px;height:6px;background:#505050;"></div>
<div class="abs" style="left:84px;top:876px;width:240px;height:6px;background:#c8d0d8;"></div>
<svg class="abs" style="left:0;top:0" width="1287" height="882" viewBox="0 0 1287 882" font-family="Liberation Sans, sans-serif"><text x="7" y="617" fill="#000" font-size="12" textLength="205" lengthAdjust="spacingAndGlyphs" >References (4 of 4 unique, 4 displayed)</text>
<polygon points="1238.5,609.5 1247.5,609.5 1243,614.5" fill="#000"/>
<path d="M1255.5,608.5 h5 v6.5 h-5 z M1259.2,608.5 v6.5 M1254,615.2 h8 M1258,615.2 v4.3" stroke="#000" stroke-width="1.1" fill="none"/>
<path d="M1270.5,607.5 l9,9 M1279.5,607.5 l-9,9" stroke="#000" stroke-width="2"/>
<text x="17" y="641.5" fill="#000" font-size="12" textLength="26.5" lengthAdjust="spacingAndGlyphs" >Tools</text>
<rect x="17" y="643.5" width="6.5" height="1" fill="#000"/>
<text x="59" y="641.5" fill="#000" font-size="12" textLength="53" lengthAdjust="spacingAndGlyphs" >Properties</text>
<rect x="59" y="643.5" width="7" height="1" fill="#000"/>
<g stroke="#1f78d0" stroke-width="1.4"><path d="M14,657 v15" stroke="#000" stroke-width="1.2" fill="none"/><path d="M14,657.5 h3 M14,664.5 h3 M14,672 h3" stroke="#000" stroke-width="1.2"/><path d="M19,657.5 h7 M19,664.5 h7 M19,672 h7"/></g>
<g fill="#000"><circle cx="14" cy="657.5" r="1.4"/><circle cx="17.5" cy="664.5" r="1.4"/><circle cx="17.5" cy="672" r="1.4"/></g>
<polygon points="37.5,666.5 45,666.5 41.2,671" fill="#000"/>
<g><path d="M60,656.5 h10 l5,5 v15 h-16 v-20 z" fill="#fff" stroke="#222" stroke-width="1.1"/><path d="M70,656.5 v5 h5" fill="none" stroke="#222" stroke-width="1"/><rect x="62" y="663" width="8" height="10" fill="#7fe0f0" stroke="#20a0c0" stroke-width=".8"/><path d="M78,669 h-9 m3,-3 l-3,3 l3,3" stroke="#000" stroke-width="1.3" fill="none"/><circle cx="60" cy="659" r="2.2" fill="#ffd800" stroke="#e03000" stroke-width="1.2"/><path d="M60,655 v8 M56,659 h8 M57.2,656.2 l5.6,5.6 M62.8,656.2 l-5.6,5.6" stroke="#e82000" stroke-width=".8"/></g>
<path d="M90.5,657.5 h6 l4,4 v8 h-10 z" fill="#dcdcdc" stroke="#c4c4c4"/>
<path d="M93,663 l10,11 M104,663 l-10,11" stroke="#686868" stroke-width="1.2"/><ellipse cx="93.5" cy="675" rx="2" ry="2.6" fill="#f8f8f8" stroke="#909090" stroke-width=".9" transform="rotate(35 93.5 675)"/><ellipse cx="103.5" cy="675" rx="2" ry="2.6" fill="#f8f8f8" stroke="#909090" stroke-width=".9" transform="rotate(-35 103.5 675)"/>
<g fill="#e4e4e4" stroke="#c0c0c0"><path d="M119.5,665 v-6.5 h6 l3,3 v3.5"/><rect x="115.5" y="665.5" width="16" height="10"/><path d="M118.5,671.5 h10" stroke="#a8a8a8" stroke-dasharray="1.5 1.5"/></g>
<path d="M147.5,659.5 h3 M147.5,659.5 v13 h3" fill="none" stroke="#909090" stroke-dasharray="1.2 1.4"/>
<path d="M153,660 l7,-5 l4,3 l-7,6.5 z" fill="#b4b4b4" stroke="#a0a0a0" stroke-width=".7"/><path d="M153,660 l3,3.5 l2,-1.5" fill="#8c8c8c"/>
<path d="M152,665 l9.5,9 M162,665 l-9.5,9" stroke="#585858" stroke-width="1.2"/><ellipse cx="152.5" cy="675" rx="2" ry="2.6" fill="#f8f8f8" stroke="#808080" stroke-width=".9" transform="rotate(35 152.5 675)"/><ellipse cx="161.5" cy="675" rx="2" ry="2.6" fill="#f8f8f8" stroke="#808080" stroke-width=".9" transform="rotate(-35 161.5 675)"/>
<path d="M172,661.5 h4 l2,-3 h7 l2,3.5 h3 v5 h-16 v-4 z" fill="#c8c8c8" stroke="#a8a8a8"/><circle cx="180" cy="667.5" r="2.2" fill="#a8a8a8"/><path d="M184,656.5 l8.5,7.5 l-5,5.5" fill="none" stroke="#585858" stroke-width="1.5"/><ellipse cx="185.5" cy="671" rx="2.5" ry="3" fill="#f4f4f4" stroke="#a0a0a0"/>
<path d="M206,664 h3 l3,-4.5 h6 l2,3 h3 v5 h-17 z" fill="#c8c8c8" stroke="#a8a8a8"/><circle cx="214" cy="667.5" r="2.2" fill="#a8a8a8"/><path d="M209,656.5 l-7.5,8 l3,3.5" fill="none" stroke="#585858" stroke-width="1.5"/><ellipse cx="209" cy="671" rx="2.5" ry="3" fill="#f4f4f4" stroke="#a0a0a0"/>
<path d="M231.5,656.5 h11 l7,7 v11 h-18 z" fill="#d6d6d6" stroke="#c0c0c0"/><path d="M242.5,656.5 v7 h7" fill="#e4e4e4" stroke="#c0c0c0"/><path d="M236,664.5 h6 m-2,-2.2 l2.2,2.2 l-2.2,2.2 M244,670.5 h-6 m2,-2.2 l-2.2,2.2 l2.2,2.2" stroke="#585858" fill="none" stroke-width="1.2"/>
<path d="M269.5,656.5 h4.5 l2.5,2.5 v6.5 h-7 z" fill="#dcdcdc" stroke="#b8b8b8"/>
<rect x="260.5" y="665.5" width="7" height="9" fill="none" stroke="#909090" stroke-dasharray="1.5 1.3"/>
<path d="M259.5,661.5 v-2.5 h6 m-2.2,-2.2 l2.4,2.2 l-2.4,2.2" stroke="#585858" stroke-width="1.2" fill="none"/>
<path d="M298.5,656.5 h4.5 l2.5,2.5 v6.5 h-7 z" fill="#dcdcdc" stroke="#b8b8b8"/>
<path d="M289.5,665.5 h4 l2.5,2.5 v6.5 h-6.5 z" fill="#dcdcdc" stroke="#b8b8b8"/>
<path d="M288.5,661.5 v-2.5 h6 m-2.2,-2.2 l2.4,2.2 l-2.4,2.2" stroke="#585858" stroke-width="1.2" fill="none"/>
<path d="M319.5,657.5 h5 M330.5,657.5 l6,6 v11 h-17 v-11" fill="#e4e4e4" stroke="#b8b8b8"/><path d="M319.5,663 h4 l3.5,3.5 v8 h-7.5 z" fill="#d0d0d0" stroke="#b8b8b8"/><path d="M322.5,662 v-5 m-2,2 l2,-2.2 l2,2.2 M329,669.5 h6 m-2,-2 l2.2,2 l-2.2,2" stroke="#585858" stroke-width="1.1" fill="none"/>
<path d="M347.5,657.5 h10 v4 l-3,3 h-7 z" fill="#d0d0d0" stroke="#b8b8b8"/><rect x="359.5" y="665.5" width="7" height="9" fill="none" stroke="#a0a0a0" stroke-dasharray="1.5 1.3"/><path d="M352,667 a3.8,3.8 0 1 0 4,1.5 M352,667 l-2.5,.5 m2.5,-.5 l.3,2.6" stroke="#585858" fill="none" stroke-width="1.3"/>
<path d="M386.5,662.5 h3.5 l2.5,2.5 v7 h-6 z" fill="#d4d4d4" stroke="#b8b8b8"/><path d="M385,662.5 h-6.5 v9.5 h6.5" fill="none" stroke="#909090" stroke-dasharray="1.5 1.3"/><path d="M385.5,655 v21" stroke="#909090" stroke-dasharray="2 1.3"/><path d="M380,660 a6,5 0 0 1 11,-1" stroke="#909090" fill="none" stroke-dasharray="2 1.3"/><polygon points="389,658 392.5,658 391,655" fill="#585858"/>
<path d="M405.5,657.5 h3 l2.5,2.5 v5.5 h-5.5 z" fill="#dcdcdc" stroke="#b8b8b8"/><path d="M413.5,656 v10 M404,668.5 h8" stroke="#909090" stroke-dasharray="1.5 1.3"/><rect x="417.5" y="657.5" width="6" height="8" fill="#dcdcdc" stroke="#b8b8b8"/><path d="M417.5,660.5 h6" stroke="#b8b8b8"/><rect x="405.5" y="671.5" width="6" height="3" fill="#dcdcdc" stroke="#b8b8b8"/>
<path d="M444,656.5 l8.5,4 v11 l-8.5,4 l-8.5,-4 v-11 z" fill="#d4d4d4" stroke="#c0c0c0"/><path d="M441,661.5 h4.5 l2.5,2.5 v6 h-7 z" fill="#e8e8e8" stroke="#b0b0b0"/><path d="M444,675.5 v-4" stroke="#c8c8c8"/>
<path d="M472.5,659.5 h5 l3.5,3.5 v8 h-6" fill="#d8d8d8" stroke="#b8b8b8"/><path d="M465,662 l11,10 M476.5,662 l-11,10" stroke="#585858" stroke-width="1.5"/>
<text x="492.5" y="669.5" fill="#000" font-size="12" textLength="64" lengthAdjust="spacingAndGlyphs" >Hilite Mode:</text>
<rect x="492.5" y="671.5" width="8" height="1" fill="#000"/>
<text x="566.5" y="669.5" fill="#000" font-size="12" textLength="57.5" lengthAdjust="spacingAndGlyphs" >Boundaries</text>
<polygon points="635.5,663 644,663 639.7,667.5" fill="#000"/>
<text x="12" y="697" fill="#000" font-size="12" textLength="51" lengthAdjust="spacingAndGlyphs" >Hierarchy</text>
<rect x="13.5" y="708.5" width="8" height="8" fill="#fff" stroke="#909090"/><path d="M15.5,712.5 h4 M17.5,710.5 v4" stroke="#2040a0" stroke-width="1"/><path d="M22,712.5 h4" stroke="#a0a0a0" stroke-dasharray="1 1"/>
<rect x="27.5" y="706.5" width="13" height="13" fill="#fff" stroke="#1f78d0" stroke-width="1.2"/><path d="M29.5,710 l2.3,7 l2.3,-7" stroke="#1f78d0" fill="none" stroke-width="1.1"/><text x="34" y="717.5" font-size="9.5" fill="#1f78d0">8</text>
<text x="46" y="718" fill="#000" font-size="12" textLength="62" lengthAdjust="spacingAndGlyphs" >R_K21597_...</text>
<path d="M17,859.5 l-5,4.5 l5,4.5 M114,859.5 l5,4.5 l-5,4.5" stroke="#404040" stroke-width="1.8" fill="none"/>
<path d="M132.5,760 v36" stroke="#808080" stroke-width="1.6" stroke-dasharray="1.5 2"/>
<text x="150" y="697" fill="#000" font-size="12" textLength="19.5" lengthAdjust="spacingAndGlyphs" >Slot</text>
<text x="242.5" y="697" fill="#000" font-size="12" textLength="52" lengthAdjust="spacingAndGlyphs" >File Name</text>
<text x="490.5" y="697" fill="#000" font-size="12" textLength="33" lengthAdjust="spacingAndGlyphs" >Model</text>
<text x="570" y="697" fill="#000" font-size="12" textLength="37.5" lengthAdjust="spacingAndGlyphs" >Logical</text>
<text x="727" y="697" fill="#000" font-size="12" textLength="59" lengthAdjust="spacingAndGlyphs" >Description</text>
<text x="871.5" y="697" fill="#000" font-size="12" textLength="59" lengthAdjust="spacingAndGlyphs" >Orientation</text>
<text x="998.5" y="697" fill="#000" font-size="12" textLength="64.5" lengthAdjust="spacingAndGlyphs" >Presentation</text>
<text x="1080" y="697" fill="#000" font-size="12" textLength="67.5" lengthAdjust="spacingAndGlyphs" >Visible Edges</text>
<path d="M190.5,687 l3,13" stroke="#303030" stroke-width="1.3"/><path d="M191,687.5 q3,-2 5.5,-.5 t5,-.5 v7 q-3,1.5 -5.5,.5 t-4,.8 z" fill="#7cc4f4" stroke="#2a80c8" stroke-width=".9"/>
<path d="M217.5,686.5 h7 l4,4 v9 h-11 z" fill="#fffbe0" stroke="#f0b800" stroke-width="1.2"/><rect x="220" y="691" width="5.5" height="7" fill="#9adcf4"/>
<text x="158.5" y="718.5" fill="#000" font-size="12" textLength="5.5" lengthAdjust="spacingAndGlyphs" >1</text>
<text x="242.5" y="718.5" fill="#000" font-size="12" textLength="233.5" lengthAdjust="spacingAndGlyphs" >PW_WORKDI...\R_K21597_GEOM_bas_01.dgn</text>
<text x="490.5" y="718.5" fill="#000" font-size="12" textLength="37" lengthAdjust="spacingAndGlyphs" >Default</text>
<text x="727" y="718.5" fill="#000" font-size="12" textLength="72.5" lengthAdjust="spacingAndGlyphs" >Master Model</text>
<text x="871.5" y="718.5" fill="#000" font-size="12" textLength="99.5" lengthAdjust="spacingAndGlyphs" >Coincident - World</text>
<text x="998.5" y="718.5" fill="#000" font-size="12" textLength="54.5" lengthAdjust="spacingAndGlyphs" >Wireframe</text>
<text x="1080" y="718.5" fill="#000" font-size="12" textLength="54.5" lengthAdjust="spacingAndGlyphs" >Wireframe</text>
<path d="M1213.0,713.5 l2.2,3 l4.3,-7.5" stroke="#505050" stroke-width="1.1" fill="none"/>
<path d="M1241.5,713.5 l2.2,3 l4.3,-7.5" stroke="#505050" stroke-width="1.1" fill="none"/>
<path d="M1270.5,713.5 l2.2,3 l4.3,-7.5" stroke="#505050" stroke-width="1.1" fill="none"/>
<text x="158.5" y="735.5" fill="#000" font-size="12" textLength="5.5" lengthAdjust="spacingAndGlyphs" >2</text>
<text x="242.5" y="735.5" fill="#000" font-size="12" textLength="231" lengthAdjust="spacingAndGlyphs" >PW_WORKD...\S_K21597_FEAT_e_bas_01.dgn</text>
<text x="490.5" y="735.5" fill="#000" font-size="12" textLength="37" lengthAdjust="spacingAndGlyphs" >Default</text>
<text x="570" y="735.5" fill="#000" font-size="12" textLength="84.5" lengthAdjust="spacingAndGlyphs" >Existing Striping</text>
<text x="727" y="735.5" fill="#000" font-size="12" textLength="72.5" lengthAdjust="spacingAndGlyphs" >Master Model</text>
<text x="871.5" y="735.5" fill="#000" font-size="12" textLength="99.5" lengthAdjust="spacingAndGlyphs" >Coincident - World</text>
<text x="998.5" y="735.5" fill="#000" font-size="12" textLength="54.5" lengthAdjust="spacingAndGlyphs" >Wireframe</text>
<text x="1080" y="735.5" fill="#000" font-size="12" textLength="46.5" lengthAdjust="spacingAndGlyphs" >Dynamic</text>
<path d="M1213.0,730.5 l2.2,3 l4.3,-7.5" stroke="#505050" stroke-width="1.1" fill="none"/>
<path d="M1241.5,730.5 l2.2,3 l4.3,-7.5" stroke="#505050" stroke-width="1.1" fill="none"/>
<path d="M1270.5,730.5 l2.2,3 l4.3,-7.5" stroke="#505050" stroke-width="1.1" fill="none"/>
<text x="158.5" y="752.5" fill="#000" font-size="12" textLength="5.5" lengthAdjust="spacingAndGlyphs" >3</text>
<text x="242.5" y="752.5" fill="#000" font-size="12" textLength="232" lengthAdjust="spacingAndGlyphs" >PW_WORKD...\S_K21597_TERR_e_bas_01.dgn</text>
<text x="490.5" y="752.5" fill="#000" font-size="12" textLength="37" lengthAdjust="spacingAndGlyphs" >Default</text>
<text x="570" y="752.5" fill="#000" font-size="12" textLength="23.5" lengthAdjust="spacingAndGlyphs" >Exist</text>
<text x="727" y="752.5" fill="#000" font-size="12" textLength="72.5" lengthAdjust="spacingAndGlyphs" >Master Model</text>
<text x="871.5" y="752.5" fill="#000" font-size="12" textLength="99.5" lengthAdjust="spacingAndGlyphs" >Coincident - World</text>
<text x="998.5" y="752.5" fill="#000" font-size="12" textLength="54.5" lengthAdjust="spacingAndGlyphs" >Wireframe</text>
<text x="1080" y="752.5" fill="#000" font-size="12" textLength="46.5" lengthAdjust="spacingAndGlyphs" >Dynamic</text>
<path d="M1213.0,747.5 l2.2,3 l4.3,-7.5" stroke="#505050" stroke-width="1.1" fill="none"/>
<path d="M1241.5,747.5 l2.2,3 l4.3,-7.5" stroke="#505050" stroke-width="1.1" fill="none"/>
<path d="M1270.5,747.5 l2.2,3 l4.3,-7.5" stroke="#505050" stroke-width="1.1" fill="none"/>
<text x="158.5" y="769.5" fill="#000" font-size="12" textLength="5.5" lengthAdjust="spacingAndGlyphs" >4</text>
<text x="242.5" y="769.5" fill="#000" font-size="12" textLength="239.5" lengthAdjust="spacingAndGlyphs" >PW_WORKDIR:dm...\S_K21597_rw_bas_01.dgn</text>
<text x="490.5" y="769.5" fill="#000" font-size="12" textLength="56" lengthAdjust="spacingAndGlyphs" >RW Design</text>
<text x="570" y="769.5" fill="#000" font-size="12" textLength="123" lengthAdjust="spacingAndGlyphs" >Existing Access Control</text>
<text x="727" y="769.5" fill="#000" font-size="12" textLength="131.5" lengthAdjust="spacingAndGlyphs" >Working design model ...</text>
<text x="871.5" y="769.5" fill="#000" font-size="12" textLength="99.5" lengthAdjust="spacingAndGlyphs" >Coincident - World</text>
<text x="998.5" y="769.5" fill="#000" font-size="12" textLength="54.5" lengthAdjust="spacingAndGlyphs" >Wireframe</text>
<text x="1080" y="769.5" fill="#000" font-size="12" textLength="54.5" lengthAdjust="spacingAndGlyphs" >Wireframe</text>
<path d="M1213.0,764.5 l2.2,3 l4.3,-7.5" stroke="#505050" stroke-width="1.1" fill="none"/>
<path d="M1241.5,764.5 l2.2,3 l4.3,-7.5" stroke="#505050" stroke-width="1.1" fill="none"/>
<path d="M1270.5,764.5 l2.2,3 l4.3,-7.5" stroke="#505050" stroke-width="1.1" fill="none"/>
<rect x="1210.5" y="687.5" width="14" height="10" fill="#fff" stroke="#505050"/><rect x="1210.5" y="687.5" width="14" height="2" fill="#8090a0"/><circle cx="1217.5" cy="693.5" r="1.6" fill="#202020"/>
<path d="M1240,698.5 q8,-1 10,-5 t3,-6" stroke="#1f78d0" stroke-width="1.4" fill="none"/><circle cx="1240" cy="698.5" r="1.7" fill="#fff" stroke="#1f78d0"/><circle cx="1253.3" cy="686.5" r="1.7" fill="#fff" stroke="#1f78d0"/>
<path d="M1272,684 v14.5 l3.3,-3.2 l2.4,5.6 l2.6,-1.1 l-2.4,-5.5 h4.6 z" fill="#000" stroke="#fff" stroke-width=".7"/>
<path d="M148.5,784.5 l-4.5,4 l4.5,4 M1269.5,784.5 l4.5,4 l-4.5,4" stroke="#404040" stroke-width="1.8" fill="none"/>
<text x="148.5" y="817.5" fill="#5a5a5a" font-size="12" textLength="26" lengthAdjust="spacingAndGlyphs" >Scale</text>
<text x="184.5" y="818" fill="#606060" font-size="12" textLength="62.5" lengthAdjust="spacingAndGlyphs" >1.000000000</text>
<text x="328" y="817" fill="#5a5a5a" font-size="12" textLength="3" lengthAdjust="spacingAndGlyphs" >:</text>
<text x="340.5" y="818" fill="#606060" font-size="12" textLength="62.5" lengthAdjust="spacingAndGlyphs" >1.000000000</text>
<text x="485" y="817.5" fill="#5a5a5a" font-size="12" textLength="44.5" lengthAdjust="spacingAndGlyphs" >Rotation</text>
<text x="539.5" y="818" fill="#606060" font-size="12" textLength="48" lengthAdjust="spacingAndGlyphs" >00°00'00&quot;</text>
<text x="639.5" y="817.5" fill="#5a5a5a" font-size="12" textLength="41" lengthAdjust="spacingAndGlyphs" >Offset X</text>
<text x="690.5" y="818" fill="#606060" font-size="12" textLength="26" lengthAdjust="spacingAndGlyphs" >0.000</text>
<text x="834.5" y="817.5" fill="#5a5a5a" font-size="12" textLength="6.5" lengthAdjust="spacingAndGlyphs" >Y</text>
<text x="850.5" y="818" fill="#606060" font-size="12" textLength="26" lengthAdjust="spacingAndGlyphs" >0.000</text>
<rect x="152.5" y="833.5" width="13" height="10" fill="#d4dfea" stroke="#788490"/><rect x="152.5" y="833.5" width="13" height="2" fill="#8896a4"/><circle cx="159" cy="839.5" r="1.5" fill="#585858"/>
<path d="M174,844 l7,-4 l5,-9" stroke="#dfe8f0" stroke-width="1.2" fill="none"/><circle cx="174" cy="844" r="1.3" fill="#dfe8f0"/><circle cx="181" cy="840" r="1.3" fill="#dfe8f0"/><circle cx="186" cy="831.5" r="1.3" fill="#dfe8f0"/>
<path d="M196.5,830.5 v14 l3.3,-3.2 l2.6,5.2 l2.6,-1.3 l-2.6,-5 h4.6 z" fill="#5c5c5c"/>
<rect x="214.5" y="830.5" width="10" height="11" fill="none" stroke="#707070" stroke-dasharray="2 1.5"/><rect x="220.5" y="837.5" width="8" height="6" fill="#c8c8c8" stroke="#909090"/><path d="M222.5,837.5 v-2 a2,2 0 0 1 4,0 v2" stroke="#909090" fill="none"/>
<text x="236.5" y="839" font-size="9" fill="#5a6a7a" textLength="13" lengthAdjust="spacingAndGlyphs">1:1</text><rect x="236.5" y="841.5" width="13" height="3.5" fill="#d0d8e0" stroke="#8090a0" stroke-width=".6"/>
<path d="M257,833.5 h1.5 v-2 h2 v2 h2 v-2 h2 v2 h2 v-2 h2 v2 h1.5 M257,843.5 h4 v-5 h5 v5 h4" stroke="#505050" fill="none" stroke-width="1.1"/>
<ellipse cx="285" cy="832" rx="6" ry="2.6" fill="#e4e4e4" stroke="#808080"/><path d="M281,835.5 l7,8.5 M289,835.5 l-7,8.5" stroke="#686868" stroke-width="1.1"/><circle cx="280.5" cy="845.5" r="1.5" fill="#f4f4f4" stroke="#808080" stroke-width=".9"/><circle cx="289.5" cy="845.5" r="1.5" fill="#f4f4f4" stroke="#808080" stroke-width=".9"/>
<path d="M299,836 a6,4.5 0 0 1 12,0 z" fill="#e4e4e4" stroke="#909090"/><path d="M306,836.5 l7,8 M313,836.5 l-6,8" stroke="#686868" stroke-width="1.1"/><circle cx="306" cy="846" r="1.5" fill="#f4f4f4" stroke="#808080" stroke-width=".9"/><circle cx="313.5" cy="846" r="1.5" fill="#f4f4f4" stroke="#808080" stroke-width=".9"/>
<g fill="#919ba8"><rect x="320.5" y="830.5" width="4" height="4"/><rect x="320.5" y="835.5" width="4" height="4"/><rect x="320.5" y="840.5" width="4" height="4"/><rect x="325.5" y="830.5" width="4" height="4"/><rect x="325.5" y="835.5" width="4" height="4"/><rect x="325.5" y="840.5" width="4" height="4"/><rect x="330.5" y="830.5" width="4" height="4"/><rect x="330.5" y="835.5" width="4" height="4"/><rect x="330.5" y="840.5" width="4" height="4"/></g>
<circle cx="349" cy="838" r="4.5" fill="none" stroke="#606060" stroke-width="1.1"/><path d="M342,835.5 h10 M342,840 h8 M346.5,833 v10" stroke="#606060" stroke-width="1"/>
<path d="M369,831 a5.2,5.2 0 0 1 3,9.5 v2 h-6 v-2 a5.2,5.2 0 0 1 3,-9.5 z" fill="#f4f8fc" stroke="#a0b0c0" stroke-width=".8"/><rect x="366.5" y="843.5" width="5" height="2.5" fill="#c0c8d0"/>
<rect x="383.5" y="830.5" width="11" height="13" fill="#d8d8d8" stroke="#a0a0a0"/><rect x="386.5" y="832.5" width="8" height="8" fill="#e8e8e8" stroke="#808080"/><text x="388" y="840" font-size="8" fill="#606060">g</text>
<text x="406" y="840" font-size="12" fill="#a8b8c8" font-weight="bold">A</text><rect x="404.5" y="841.5" width="13" height="3.5" fill="#c8d4e0" stroke="#8090a0" stroke-width=".6"/>
<rect x="426.5" y="834.5" width="10" height="7" fill="#d8d8d8" stroke="#707070"/><path d="M425,846 l12,-15" stroke="#707070"/><path d="M429,838 h5" stroke="#c03030" stroke-width="1.2"/>
<rect x="450.5" y="837.5" width="9" height="7" fill="#f4f4f4" stroke="#707070"/><path d="M446.5,838 v-2.5 a2.5,2.5 0 0 1 5,0 v2" stroke="#707070" fill="none" stroke-width="1.1"/>
<text x="465" y="841.5" fill="#5a5a5a" font-size="12" textLength="109.5" lengthAdjust="spacingAndGlyphs" >Nested Attachments:</text>
<polygon points="694.5,835 702,835 698.25,839" fill="#505050"/>
<text x="714.5" y="841.5" fill="#5a5a5a" font-size="12" textLength="78" lengthAdjust="spacingAndGlyphs" >Nesting Depth:</text>
<text x="802.5" y="842" fill="#606060" font-size="12" textLength="4.5" lengthAdjust="spacingAndGlyphs" >1</text>
<text x="843.5" y="841.5" fill="#5a5a5a" font-size="12" textLength="93" lengthAdjust="spacingAndGlyphs" >Display Overrides:</text>
<polygon points="994.5,835 1002,835 998.25,839" fill="#505050"/>
<text x="1015" y="841.5" fill="#5a5a5a" font-size="12" textLength="96.5" lengthAdjust="spacingAndGlyphs" >New Level Display:</text>
<polygon points="1212.5,835 1220,835 1216.25,839" fill="#505050"/>
<text x="149.5" y="865.5" fill="#5a5a5a" font-size="12" textLength="79.5" lengthAdjust="spacingAndGlyphs" >Georeferenced:</text>
<polygon points="327.0,859 334.5,859 330.75,863" fill="#505050"/>
<rect x="15" y="877" width="12" height="6" rx="2" fill="#2a8ae0"/>
<path d="M91,882 v-4.5 h6 l3,3 v2" fill="#f4f4f4" stroke="#808080" stroke-width=".8"/>
<text x="35" y="888" font-size="12" fill="#101020">Models</text></svg>
</body>
</html>
